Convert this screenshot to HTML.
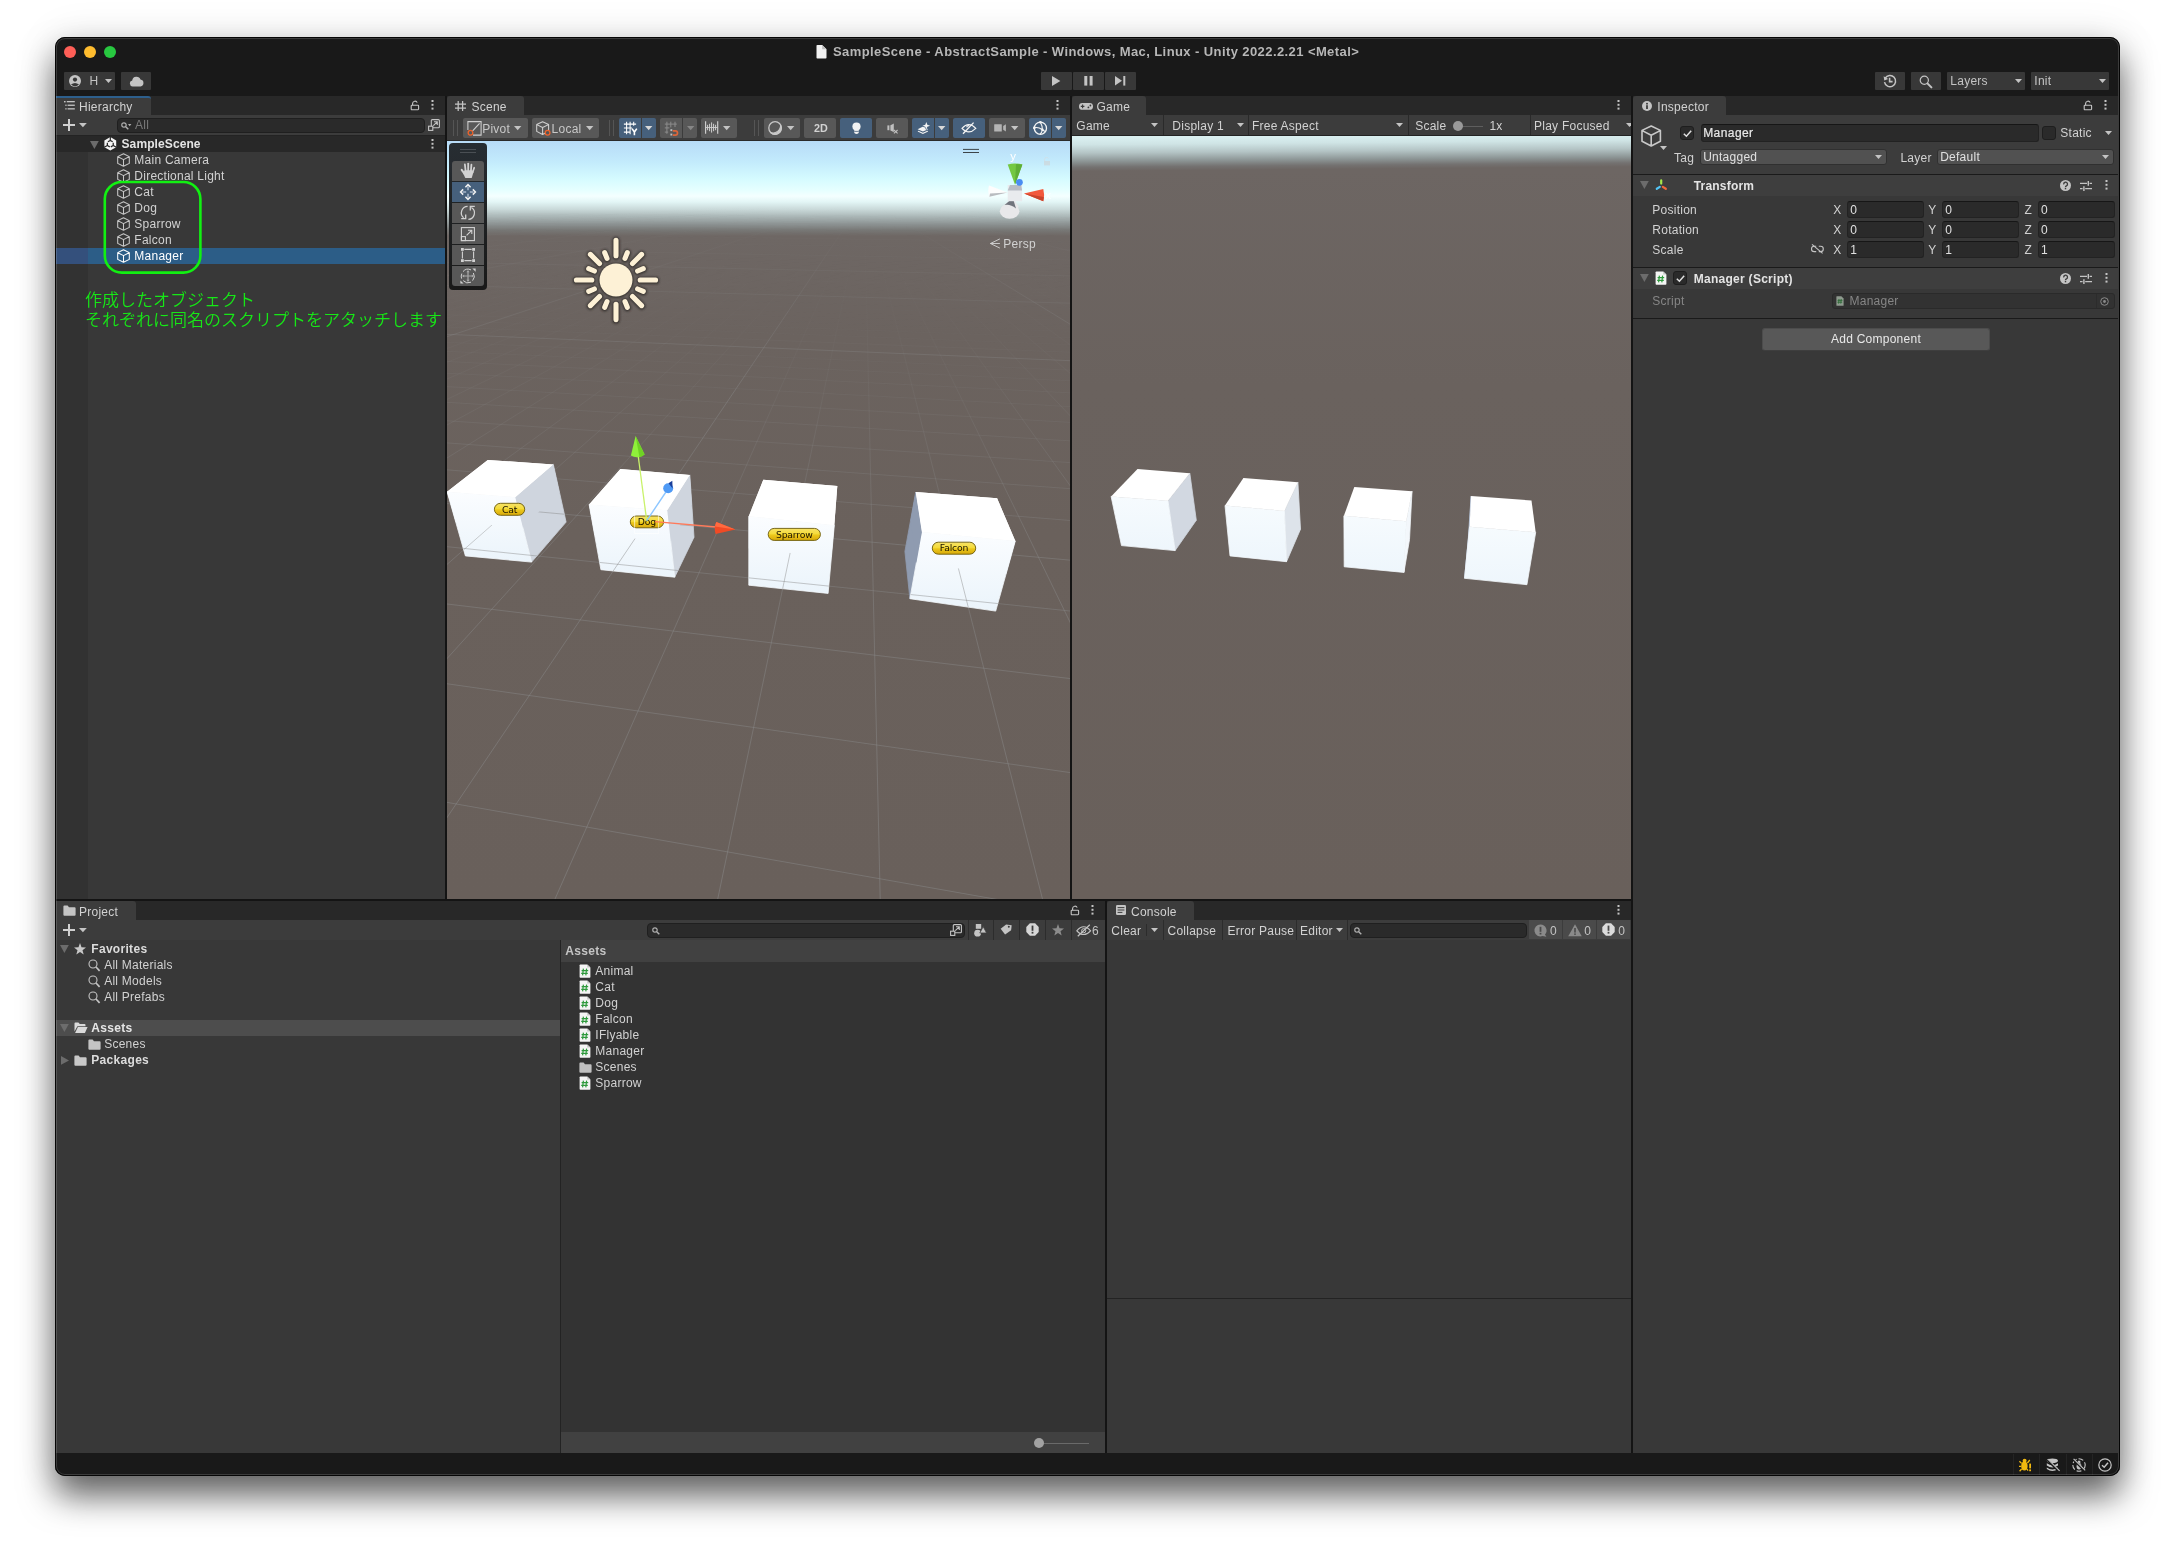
<!DOCTYPE html><html lang="ja"><head><meta charset="utf-8"><title>Unity</title><style>
html,body{margin:0;padding:0;background:#fff}
body{width:2175px;height:1549px;overflow:hidden;position:relative;font-family:"Liberation Sans","Noto Sans CJK JP",sans-serif;font-size:12px;color:#d2d2d2;letter-spacing:.25px}
#win{position:absolute;left:55px;top:37px;width:2065px;height:1439px;border-radius:10px;background:#191919;overflow:hidden;box-shadow:0 20px 34px rgba(0,0,0,.6),0 0 40px rgba(0,0,0,.1)}
#pg{position:absolute;left:-55px;top:-37px;width:2175px;height:1549px;will-change:transform}
#rim{position:absolute;left:55px;top:37px;width:2065px;height:1439px;border-radius:10px;box-shadow:inset 0 0 0 1px #060606,inset 0 0 0 2px rgba(255,255,255,.15);pointer-events:none}
.a{position:absolute}
.t{position:absolute;white-space:pre;line-height:16px;height:16px}
.b{font-weight:700}
.tabs{position:absolute;background:#282828;height:19px}
.tab{position:absolute;top:0;height:19px;background:#3c3c3c;border-radius:3px 3px 0 0}
.tb{position:absolute;background:#3c3c3c}
.pn{position:absolute;background:#383838}
.btn{position:absolute;background:#585858;border-radius:2px}
.on{background:#46607c}
.mb{position:absolute;background:#383838;height:18px;top:72px;border-radius:1px}
.fld{position:absolute;background:#2a2a2a;border:1px solid #222;border-top-color:#161616;border-radius:3px;box-sizing:border-box}
.dd{position:absolute;background:#515151;border:1px solid #303030;border-radius:3px;box-sizing:border-box}
.sep{position:absolute;background:#232323;width:1px}
svg{position:absolute;overflow:visible}
.row{position:absolute;height:16px;left:56px}
</style></head><body><div id="win"><div id="pg"><div class="a" style="left:64px;top:46px;width:12px;height:12px;border-radius:50%;background:#fe5f57"></div><div class="a" style="left:84px;top:46px;width:12px;height:12px;border-radius:50%;background:#febc2e"></div><div class="a" style="left:104px;top:46px;width:12px;height:12px;border-radius:50%;background:#28c840"></div><svg class="a" style="left:816px;top:44.5px;" width="11" height="14" viewBox="0 0 11 14"><path d="M0.5 0.8Q0.5 0 1.3 0H6.2L10.5 4.3V12.7Q10.5 13.5 9.7 13.5H1.3Q0.5 13.5 0.5 12.7Z" fill="#f2f2f2"/><path d="M6.2 0V4.3H10.5Z" fill="#bdbdbd"/></svg><div class="t b" style="left:833px;top:43.5px;font-size:13px;letter-spacing:.41px;color:#b7b7b7">SampleScene - AbstractSample - Windows, Mac, Linux - Unity 2022.2.21 &lt;Metal&gt;</div><div class="mb" style="left:64px;top:72px;width:51px;height:18px;"></div><svg class="a" style="left:69px;top:75px;" width="12" height="12" viewBox="0 0 12 12"><circle cx="6" cy="6" r="6" fill="#c4c4c4"/><circle cx="6" cy="4.6" r="2.1" fill="#383838"/><path d="M2 9.6Q6 6.2 10 9.6Q8.4 11.4 6 11.4Q3.6 11.4 2 9.6Z" fill="#383838"/></svg><div class="t " style="left:89.5px;top:73px;color:#c4c4c4">H</div><svg class="a" style="left:104.5px;top:79.3px;" width="7" height="4" viewBox="0 0 7 4"><path d="M0 0H7L3.5 4Z" fill="#c4c4c4"/></svg><div class="mb" style="left:121px;top:72px;width:30px;height:18px;"></div><svg class="a" style="left:129px;top:76px;" width="15" height="10.5" viewBox="0 0 15 10.5"><path d="M3.6 10.5A3.1 3.1 0 0 1 3.2 4.4A4.3 4.3 0 0 1 11.5 3.6A3.5 3.5 0 0 1 11.6 10.5Z" fill="#c4c4c4"/></svg><div class="mb" style="left:1041px;top:72px;width:31px;height:18px;"></div><div class="mb" style="left:1073px;top:72px;width:31px;height:18px;"></div><div class="mb" style="left:1105px;top:72px;width:30.5px;height:18px;"></div><svg class="a" style="left:1052px;top:76px;" width="9" height="10" viewBox="0 0 9 10"><path d="M0 0L8.4 5L0 10Z" fill="#c4c4c4"/></svg><svg class="a" style="left:1084px;top:76.3px;" width="10" height="9.6" viewBox="0 0 10 9.6"><rect x="0.3" y="0" width="3" height="9.6" fill="#c4c4c4"/><rect x="5.6" y="0" width="3" height="9.6" fill="#c4c4c4"/></svg><svg class="a" style="left:1115px;top:76.3px;" width="11" height="9.6" viewBox="0 0 11 9.6"><path d="M0 0L7 4.8L0 9.6Z" fill="#c4c4c4"/><rect x="8.3" y="0" width="2" height="9.6" fill="#c4c4c4"/></svg><div class="mb" style="left:1875px;top:72px;width:30px;height:18px;"></div><svg class="a" style="left:1883px;top:74px;" width="14" height="14" viewBox="0 0 14 14"><path d="M2.2 4.2A5.6 5.6 0 1 1 1.5 8.2" fill="none" stroke="#c4c4c4" stroke-width="1.5"/><path d="M0.6 2.3L1.3 6.6L5.3 5.1Z" fill="#c4c4c4"/><path d="M6.6 3.8V7.6H9.6" fill="none" stroke="#c4c4c4" stroke-width="1.6"/></svg><div class="mb" style="left:1911px;top:72px;width:30px;height:18px;"></div><svg class="a" style="left:1919px;top:74.5px;" width="14" height="14" viewBox="0 0 14 14"><circle cx="5.3" cy="5.3" r="4.1" fill="none" stroke="#c4c4c4" stroke-width="1.2"/><path d="M8.4 8.4L12.4 12.4" stroke="#c4c4c4" stroke-width="2" stroke-linecap="round"/></svg><div class="mb" style="left:1947px;top:72px;width:78px;height:18px;"></div><div class="t " style="left:1950.3px;top:73px;color:#c4c4c4">Layers</div><svg class="a" style="left:2014.5px;top:79.3px;" width="7" height="4" viewBox="0 0 7 4"><path d="M0 0H7L3.5 4Z" fill="#c4c4c4"/></svg><div class="mb" style="left:2031px;top:72px;width:78px;height:18px;"></div><div class="t " style="left:2034.3px;top:73px;color:#c4c4c4">Init</div><svg class="a" style="left:2098.5px;top:79.3px;" width="7" height="4" viewBox="0 0 7 4"><path d="M0 0H7L3.5 4Z" fill="#c4c4c4"/></svg><div class="a" style="left:56px;top:96px;width:2062px;height:1357px;background:#141414"></div><div class="tabs" style="left:56px;top:96px;width:389px;height:19px;"></div><div class="tab" style="left:56px;top:96px;width:95px;height:19px;left:56px;top:96px;border-radius:0 3px 0 0;border-top:2px solid #2d5f8c;box-sizing:border-box"></div><svg class="a" style="left:63.5px;top:101.3px;" width="11" height="9" viewBox="0 0 11 9"><rect x="0" y="0" width="1.6" height="1.4" fill="#c4c4c4"/><rect x="2.8" y="0" width="8" height="1.3" fill="#c4c4c4"/><rect x="3.6" y="3.6" width="7.2" height="1.3" fill="#c4c4c4"/><rect x="1.3" y="3.6" width="1.3" height="1.3" fill="#c4c4c4"/><rect x="3.6" y="7.2" width="7.2" height="1.3" fill="#c4c4c4"/><rect x="1.3" y="7.2" width="1.3" height="1.3" fill="#c4c4c4"/></svg><div class="t " style="left:79px;top:99px;">Hierarchy</div><svg class="a" style="left:410px;top:99.5px;" width="10" height="11" viewBox="0 0 10 11"><path d="M2.6 5.2V3.4A2.4 2.4 0 0 1 7.2 2.6" fill="none" stroke="#c4c4c4" stroke-width="1.1"/><rect x="1.2" y="5.3" width="7.4" height="4.4" rx=".6" fill="none" stroke="#c4c4c4" stroke-width="1.1"/></svg><svg class="a" style="left:430.5px;top:100px;" width="3" height="10" viewBox="0 0 3 10"><rect x=".5" y="0" width="2" height="2" fill="#c4c4c4"/><rect x=".5" y="3.8" width="2" height="2" fill="#c4c4c4"/><rect x=".5" y="7.6" width="2" height="2" fill="#c4c4c4"/></svg><div class="tb" style="left:56px;top:115px;width:389px;height:20px;"></div><div class="a" style="left:56px;top:135px;width:389px;height:1px;background:#232323"></div><svg class="a" style="left:63px;top:119px;" width="12" height="12" viewBox="0 0 12 12"><path d="M6 0V12M0 6H12" stroke="#d0d0d0" stroke-width="2"/></svg><svg class="a" style="left:79.1px;top:123.0px;" width="7.8" height="4.2" viewBox="0 0 7.8 4.2"><path d="M0 0H7.8L3.9 4.2Z" fill="#c4c4c4"/></svg><div class="fld" style="left:116.5px;top:117.5px;width:308px;height:15px;background:#2a2a2a;border-color:#1f1f1f;border-radius:4px"></div><svg class="a" style="left:121px;top:121.5px;" width="8" height="8" viewBox="0 0 8 8"><circle cx="3" cy="3" r="2.2" fill="none" stroke="#b0b0b0" stroke-width="1.2"/><path d="M4.7 4.7L7.3 7.3" stroke="#b0b0b0" stroke-width="1.4"/></svg><svg class="a" style="left:128.3px;top:124.3px;" width="3.4" height="2.2" viewBox="0 0 3.4 2.2"><path d="M0 0H3.4L1.7 2.2Z" fill="#b0b0b0"/></svg><div class="t " style="left:135px;top:117.2px;color:#7a7a7a">All</div><svg class="a" style="left:427.5px;top:118.5px;" width="12" height="12" viewBox="0 0 12 12"><rect x="3.3" y=".6" width="8.1" height="8.1" rx="1" fill="none" stroke="#c4c4c4" stroke-width="1.1"/><rect x=".6" y="7.2" width="4.2" height="4.2" fill="#3c3c3c" stroke="#c4c4c4" stroke-width="1.1"/><path d="M5.3 6.7L9.2 2.8M6 2.7H9.3V6" fill="none" stroke="#c4c4c4" stroke-width="1.1"/></svg><div class="pn" style="left:56px;top:136px;width:389px;height:763px;"></div><div class="a" style="left:56px;top:136px;width:32px;height:763px;background:#323232"></div><div class="a" style="left:56px;top:136px;width:389px;height:15.5px;background:#282828"></div><div class="a" style="left:56px;top:248px;width:389px;height:16px;background:#2c5d87"></div><div class="a" style="left:56px;top:248px;width:32px;height:16px;background:#34507c"></div><svg class="a" style="left:90.2px;top:140.8px;" width="9" height="8" viewBox="0 0 9 8"><path d="M0 0H8.8L4.4 8Z" fill="#6c6c6c"/></svg><svg class="a" style="left:103.8px;top:137.1px;" width="12.6" height="13.6" viewBox="0 0 12.6 13.6"><path d="M6.3 0L12.2 3.4V10.2L6.3 13.6L0.4 10.2V3.4Z" fill="#f6f6f6"/><g fill="none" stroke="#282828" stroke-width="1.25"><path id="uw" d="M6.3 -0.2V3.4M3.9 4.8L6.3 3.4L8.7 4.8"/><use href="#uw" transform="rotate(120 6.3 6.8)"/><use href="#uw" transform="rotate(240 6.3 6.8)"/></g></svg><div class="t b" style="left:121.5px;top:136px;color:#e4e4e4;letter-spacing:.1px">SampleScene</div><svg class="a" style="left:431.0px;top:139px;" width="3" height="10" viewBox="0 0 3 10"><rect x=".5" y="0" width="2" height="2" fill="#c4c4c4"/><rect x=".5" y="3.8" width="2" height="2" fill="#c4c4c4"/><rect x=".5" y="7.6" width="2" height="2" fill="#c4c4c4"/></svg><svg class="a" style="left:117px;top:153.2px;" width="13" height="14" viewBox="0 0 13 14"><path d="M6.5 0.7L12.3 3.6V10.4L6.5 13.3L0.7 10.4V3.6Z M0.9 3.7L6.5 6.6L12.1 3.7 M6.5 6.6V13.2" fill="none" stroke="#c8c8c8" stroke-width="1.05" stroke-linejoin="round"/></svg><div class="t " style="left:134.3px;top:152px;color:#d2d2d2">Main Camera</div><svg class="a" style="left:117px;top:169.2px;" width="13" height="14" viewBox="0 0 13 14"><path d="M6.5 0.7L12.3 3.6V10.4L6.5 13.3L0.7 10.4V3.6Z M0.9 3.7L6.5 6.6L12.1 3.7 M6.5 6.6V13.2" fill="none" stroke="#c8c8c8" stroke-width="1.05" stroke-linejoin="round"/></svg><div class="t " style="left:134.3px;top:168px;color:#d2d2d2">Directional Light</div><svg class="a" style="left:117px;top:185.2px;" width="13" height="14" viewBox="0 0 13 14"><path d="M6.5 0.7L12.3 3.6V10.4L6.5 13.3L0.7 10.4V3.6Z M0.9 3.7L6.5 6.6L12.1 3.7 M6.5 6.6V13.2" fill="none" stroke="#c8c8c8" stroke-width="1.05" stroke-linejoin="round"/></svg><div class="t " style="left:134.3px;top:184px;color:#d2d2d2">Cat</div><svg class="a" style="left:117px;top:201.2px;" width="13" height="14" viewBox="0 0 13 14"><path d="M6.5 0.7L12.3 3.6V10.4L6.5 13.3L0.7 10.4V3.6Z M0.9 3.7L6.5 6.6L12.1 3.7 M6.5 6.6V13.2" fill="none" stroke="#c8c8c8" stroke-width="1.05" stroke-linejoin="round"/></svg><div class="t " style="left:134.3px;top:200px;color:#d2d2d2">Dog</div><svg class="a" style="left:117px;top:217.2px;" width="13" height="14" viewBox="0 0 13 14"><path d="M6.5 0.7L12.3 3.6V10.4L6.5 13.3L0.7 10.4V3.6Z M0.9 3.7L6.5 6.6L12.1 3.7 M6.5 6.6V13.2" fill="none" stroke="#c8c8c8" stroke-width="1.05" stroke-linejoin="round"/></svg><div class="t " style="left:134.3px;top:216px;color:#d2d2d2">Sparrow</div><svg class="a" style="left:117px;top:233.2px;" width="13" height="14" viewBox="0 0 13 14"><path d="M6.5 0.7L12.3 3.6V10.4L6.5 13.3L0.7 10.4V3.6Z M0.9 3.7L6.5 6.6L12.1 3.7 M6.5 6.6V13.2" fill="none" stroke="#c8c8c8" stroke-width="1.05" stroke-linejoin="round"/></svg><div class="t " style="left:134.3px;top:232px;color:#d2d2d2">Falcon</div><svg class="a" style="left:117px;top:249.2px;" width="13" height="14" viewBox="0 0 13 14"><path d="M6.5 0.7L12.3 3.6V10.4L6.5 13.3L0.7 10.4V3.6Z M0.9 3.7L6.5 6.6L12.1 3.7 M6.5 6.6V13.2" fill="none" stroke="#ffffff" stroke-width="1.05" stroke-linejoin="round"/></svg><div class="t " style="left:134.3px;top:248px;color:#ffffff">Manager</div><svg class="a" style="left:0px;top:0px;pointer-events:none" width="2175" height="1549" viewBox="0 0 2175 1549"><rect x="104.8" y="182" width="95.6" height="90.6" rx="17" ry="17" fill="none" stroke="#12f012" stroke-width="2.6"/></svg><div class="a" style="left:85px;top:290.8px;font-size:17px;line-height:20.6px;color:#16e816;font-weight:350;letter-spacing:0;white-space:pre">作成したオブジェクト
それぞれに同名のスクリプトをアタッチします</div><div class="tabs" style="left:447px;top:96px;width:623px;height:19px;"></div><div class="tab" style="left:447px;top:96px;width:77px;height:19px;left:447px;top:96px"></div><svg class="a" style="left:455px;top:101px;" width="11" height="10" viewBox="0 0 11 10"><path d="M3.2 0V10M7.6 0V10M0 3H11M0 7.2H11" stroke="#c4c4c4" stroke-width="1.25" fill="none"/></svg><div class="t " style="left:471.5px;top:99px;">Scene</div><svg class="a" style="left:1055.5px;top:100px;" width="3" height="10" viewBox="0 0 3 10"><rect x=".5" y="0" width="2" height="2" fill="#c4c4c4"/><rect x=".5" y="3.8" width="2" height="2" fill="#c4c4c4"/><rect x=".5" y="7.6" width="2" height="2" fill="#c4c4c4"/></svg><div class="tb" style="left:447px;top:115px;width:623px;height:26px;"></div><div class="a" style="left:447px;top:140px;width:623px;height:1px;background:#2a2a2a"></div><div class="a" style="left:453px;top:120px;width:1px;height:16px;background:#555"></div><div class="a" style="left:456.5px;top:120px;width:1px;height:16px;background:#555"></div><div class="a" style="left:609px;top:120px;width:1px;height:16px;background:#555"></div><div class="a" style="left:612.5px;top:120px;width:1px;height:16px;background:#555"></div><div class="a" style="left:754px;top:120px;width:1px;height:16px;background:#555"></div><div class="a" style="left:757.5px;top:120px;width:1px;height:16px;background:#555"></div><div class="btn" style="left:463px;top:118px;width:65px;height:20px;border-radius:2px"></div><svg class="a" style="left:466.5px;top:120.5px;" width="15" height="15" viewBox="0 0 15 15"><path d="M0.9 9V0.6H14.1V14.1H6" fill="none" stroke="#d0d0d0" stroke-width="1.05"/><path d="M5.6 9.8L12.6 2.4" stroke="#d0d0d0" stroke-width="1.1"/><circle cx="3.5" cy="11.8" r="2.35" fill="none" stroke="#f0642c" stroke-width="1.25"/></svg><div class="t " style="left:482.2px;top:120.5px;color:#c8c8c8">Pivot</div><svg class="a" style="left:514.3px;top:126.20000000000002px;" width="7.4" height="4.2" viewBox="0 0 7.4 4.2"><path d="M0 0H7.4L3.7 4.2Z" fill="#c4c4c4"/></svg><div class="btn" style="left:532px;top:118px;width:67px;height:20px;border-radius:2px"></div><svg class="a" style="left:535.5px;top:120.6px;" width="15" height="15" viewBox="0 0 15 15"><path d="M6.6 0.7L12.6 3.5V10.4L6.6 13.5L0.7 10.4V3.5Z M0.8 3.6L6.6 6.5L12.5 3.6 M6.6 6.5V13.3" fill="none" stroke="#d0d0d0" stroke-width="1.05" stroke-linejoin="round"/><circle cx="11.6" cy="11.7" r="2.35" fill="#555" stroke="#f0642c" stroke-width="1.25"/></svg><div class="t " style="left:551.6px;top:120.5px;color:#c8c8c8">Local</div><svg class="a" style="left:585.5999999999999px;top:126.20000000000002px;" width="7.4" height="4.2" viewBox="0 0 7.4 4.2"><path d="M0 0H7.4L3.7 4.2Z" fill="#c4c4c4"/></svg><div class="btn on" style="left:619px;top:118px;width:22px;height:20px;border-radius:2px 0 0 2px"></div><div class="btn on" style="left:642px;top:118px;width:14px;height:20px;border-radius:0 2px 2px 0"></div><svg class="a" style="left:622.5px;top:120.5px;" width="17" height="15" viewBox="0 0 17 15"><path d="M3.6 0.7V13.2M7.1 0.7V13.2M10.7 0.7V4.8M0.9 3.1H13.1M0.9 6.9H9M0.9 11.1H7.6" stroke="#fff" stroke-width="1.05" fill="none"/><path d="M9 7.6L11.4 11L13.8 7.6M11.4 11V14.2" stroke="#fff" stroke-width="1.6" fill="none"/></svg><svg class="a" style="left:645.0px;top:126.20000000000002px;" width="7.4" height="4.2" viewBox="0 0 7.4 4.2"><path d="M0 0H7.4L3.7 4.2Z" fill="#d8d8d8"/></svg><div class="btn" style="left:660px;top:118px;width:22px;height:20px;border-radius:2px 0 0 2px"></div><div class="btn" style="left:683px;top:118px;width:14px;height:20px;border-radius:0 2px 2px 0"></div><svg class="a" style="left:663.5px;top:120.5px;" width="17" height="15" viewBox="0 0 17 15"><path d="M2.9 0.7V12.8M6.8 0.7V6.4M11 0.7V6M0.8 3.1H12.8M0.8 6.9H5.4M0.8 11.1H4.2" stroke="#8c8c8c" stroke-width="1" fill="none"/><rect x="6.4" y="8.2" width="1.9" height="1.9" fill="#c0c0c0"/><rect x="6.4" y="12.6" width="1.9" height="1.9" fill="#c0c0c0"/><path d="M8.8 9.8H11.3A2.2 2.2 0 0 1 11.3 14.2H8.8" fill="none" stroke="#dc663a" stroke-width="1.7"/></svg><svg class="a" style="left:686.5px;top:126.20000000000002px;" width="7.4" height="4.2" viewBox="0 0 7.4 4.2"><path d="M0 0H7.4L3.7 4.2Z" fill="#868686"/></svg><div class="btn" style="left:701px;top:118px;width:36px;height:20px;border-radius:2px"></div><svg class="a" style="left:705px;top:121px;" width="14" height="14" viewBox="0 0 14 14"><path d="M0.6 0.2V12.8M12.7 0.2V12.8" stroke="#d0d0d0" stroke-width="1.15"/><path d="M2.6 3.8V9.2M4.6 2.8V10.2M6.6 1.4V11.6M8.6 2.8V10.2M10.6 3.8V9.2" stroke="#d0d0d0" stroke-width="1"/><path d="M0.6 6.5H12.7" stroke="#d0d0d0" stroke-width=".9"/></svg><svg class="a" style="left:723.3px;top:126.20000000000002px;" width="7.4" height="4.2" viewBox="0 0 7.4 4.2"><path d="M0 0H7.4L3.7 4.2Z" fill="#c4c4c4"/></svg><div class="btn" style="left:764px;top:118px;width:36px;height:20px;border-radius:2px"></div><svg class="a" style="left:768px;top:121px;" width="14.4" height="14.4" viewBox="0 0 14.4 14.4"><circle cx="7.1" cy="7" r="6.3" fill="none" stroke="#c8c8c8" stroke-width="1.3"/><path d="M12.6 4A6.4 6.4 0 0 1 2.6 11.6A7.6 7.6 0 0 0 12.6 4Z" fill="#c8c8c8" stroke="#c8c8c8" stroke-width="1.1"/></svg><svg class="a" style="left:786.5999999999999px;top:126.30000000000001px;" width="7.4" height="4.2" viewBox="0 0 7.4 4.2"><path d="M0 0H7.4L3.7 4.2Z" fill="#c4c4c4"/></svg><div class="btn" style="left:804px;top:118px;width:32px;height:20px;border-radius:2px"></div><div class="t b" style="left:813.9px;top:120.2px;font-size:10.8px;color:#d2d2d2;letter-spacing:0">2D</div><div class="btn on" style="left:840px;top:118px;width:32px;height:20px;border-radius:2px"></div><svg class="a" style="left:851.5px;top:121.6px;" width="9" height="13" viewBox="0 0 9 13"><circle cx="4.5" cy="4.5" r="4.1" fill="#f2f2f2"/><path d="M2.3 7.4H6.7V10.2Q6.7 12 4.5 12Q2.3 12 2.3 10.2Z" fill="#f2f2f2"/><rect x="2.3" y="8.9" width="4.4" height=".8" fill="#46607c"/></svg><div class="btn" style="left:876px;top:118px;width:32px;height:20px;border-radius:2px"></div><svg class="a" style="left:886.5px;top:122.6px;" width="12" height="11" viewBox="0 0 12 11"><rect x="0.4" y="2.4" width="2" height="4.8" fill="#c0c0c0"/><path d="M3.4 2.2Q5 1.6 6.8 0.4V9.2Q5 8 3.4 7.4Z" fill="#c0c0c0"/><path d="M6.9 7L10.6 10.4M10.6 7L6.9 10.4" stroke="#c0c0c0" stroke-width="1.1"/></svg><div class="btn on" style="left:912px;top:118px;width:22px;height:20px;border-radius:2px 0 0 2px"></div><div class="btn on" style="left:935px;top:118px;width:14px;height:20px;border-radius:0 2px 2px 0"></div><svg class="a" style="left:916.6px;top:121.6px;" width="14" height="12.4" viewBox="0 0 14 12.4"><path d="M9.3 0L10.3 2.8L13.1 3.8L10.3 4.8L9.3 7.6L8.3 4.8L5.5 3.8L8.3 2.8Z" fill="#f4f4f4"/><path d="M5.6 4.8L0.6 7.2L5.9 9.6L11.2 7.2L10 6.6L9.3 8.4L8 5.6Z" fill="#f4f4f4"/><path d="M1.4 8.8L0.6 9.4L5.9 11.9L11.2 9.4L10.4 8.8L5.9 10.8Z" fill="#f4f4f4"/></svg><svg class="a" style="left:938.3px;top:126.20000000000002px;" width="7.4" height="4.2" viewBox="0 0 7.4 4.2"><path d="M0 0H7.4L3.7 4.2Z" fill="#d8d8d8"/></svg><div class="btn on" style="left:953px;top:118px;width:32px;height:20px;border-radius:2px"></div><svg class="a" style="left:961.4px;top:121.6px;" width="16" height="12.6" viewBox="0 0 16 12.6"><path d="M1 6.3Q7.7 -1 14.8 6.3Q7.7 13.4 1 6.3Z" fill="none" stroke="#f4f4f4" stroke-width="1.15"/><path d="M5.6 5.2A2.4 2.4 0 0 1 8 3.6" fill="none" stroke="#f4f4f4" stroke-width="1.1"/><path d="M2 11.8L12.6 0.6" stroke="#f4f4f4" stroke-width="1.35"/></svg><div class="btn" style="left:989px;top:118px;width:36px;height:20px;border-radius:2px"></div><svg class="a" style="left:994px;top:124.4px;" width="12.4" height="8" viewBox="0 0 12.4 8"><rect x="0.2" y="0.2" width="7.6" height="7.3" rx="0.5" fill="#b4b4b4"/><path d="M9.2 2L11.9 0.2V7.5L9.2 5.7Z" fill="#b4b4b4"/></svg><svg class="a" style="left:1011.3px;top:126.20000000000002px;" width="7.4" height="4.2" viewBox="0 0 7.4 4.2"><path d="M0 0H7.4L3.7 4.2Z" fill="#c4c4c4"/></svg><div class="btn on" style="left:1029px;top:118px;width:22px;height:20px;border-radius:2px 0 0 2px"></div><div class="btn on" style="left:1052px;top:118px;width:14px;height:20px;border-radius:0 2px 2px 0"></div><svg class="a" style="left:1033px;top:121px;" width="15" height="15" viewBox="0 0 15 15"><circle cx="7.4" cy="7.2" r="6.1" fill="none" stroke="#f4f4f4" stroke-width="1.3"/><path d="M7.4 1.2Q9.6 5 9.4 8.8M1.4 6.8Q5 5.6 9.4 8.8Q11.6 10.2 12.4 10.6M9.4 8.8Q8.8 11.6 7 13.2" fill="none" stroke="#f4f4f4" stroke-width="1.1"/><circle cx="7.4" cy="1.3" r="1.3" fill="#f4f4f4"/><circle cx="1.3" cy="6.9" r="1.3" fill="#f4f4f4"/><circle cx="9.4" cy="8.8" r="1.3" fill="#f4f4f4"/></svg><svg class="a" style="left:1055.3px;top:126.20000000000002px;" width="7.4" height="4.2" viewBox="0 0 7.4 4.2"><path d="M0 0H7.4L3.7 4.2Z" fill="#d8d8d8"/></svg><svg class="a" style="left:447px;top:141px;overflow:hidden" width="623" height="758" viewBox="447 141 623 758"><defs>
<linearGradient id="sky" x1="0" y1="141" x2="0" y2="236" gradientUnits="userSpaceOnUse">
<stop offset="0" stop-color="#b7dbf7"/><stop offset=".22" stop-color="#c3ebfc"/><stop offset=".40" stop-color="#d5fbff"/><stop offset=".52" stop-color="#e6ffff"/><stop offset=".58" stop-color="#f4ffff"/><stop offset=".64" stop-color="#e3f6f6"/><stop offset=".72" stop-color="#c9d9d9"/><stop offset=".80" stop-color="#a9b5b5"/><stop offset=".88" stop-color="#8b9191"/><stop offset=".94" stop-color="#777775"/><stop offset="1" stop-color="#6e6764"/></linearGradient>
<linearGradient id="gmin" x1="0" y1="236" x2="0" y2="898" gradientUnits="userSpaceOnUse"><stop offset="0.000" stop-color="#888888" stop-opacity="0"/><stop offset="0.127" stop-color="#888888" stop-opacity="0.04"/><stop offset="0.248" stop-color="#888888" stop-opacity="0.15"/><stop offset="0.369" stop-color="#888888" stop-opacity="0.3"/><stop offset="0.489" stop-color="#888888" stop-opacity="0.45"/><stop offset="1.000" stop-color="#888888" stop-opacity="0.52"/></linearGradient>
<linearGradient id="gmaj" x1="0" y1="204" x2="0" y2="898" gradientUnits="userSpaceOnUse"><stop offset="0.000" stop-color="#888888" stop-opacity="0"/><stop offset="0.052" stop-color="#888888" stop-opacity="0.05"/><stop offset="0.138" stop-color="#888888" stop-opacity="0.22"/><stop offset="0.282" stop-color="#888888" stop-opacity="0.45"/><stop offset="1.000" stop-color="#888888" stop-opacity="0.52"/></linearGradient>
<linearGradient id="sgr" x1="0" y1="236" x2="0" y2="898" gradientUnits="userSpaceOnUse"><stop offset="0" stop-color="#6e6764"/><stop offset=".15" stop-color="#6b635f"/><stop offset=".45" stop-color="#6a615c"/><stop offset="1" stop-color="#69605b"/></linearGradient><linearGradient id="fr" x1="0" y1="0" x2="0" y2="1"><stop offset="0" stop-color="#fbfdff"/><stop offset="1" stop-color="#ecf5fb"/></linearGradient>
<linearGradient id="pill" x1="0" y1="0" x2="0" y2="1"><stop offset="0" stop-color="#f6e268"/><stop offset=".45" stop-color="#f5dc3a"/><stop offset=".55" stop-color="#ecc81c"/><stop offset="1" stop-color="#d8a90a"/></linearGradient>
<filter id="sh" x="-20%" y="-20%" width="140%" height="140%"><feGaussianBlur stdDeviation="0.9"/></filter>
</defs><rect x="447" y="141" width="623" height="96" fill="url(#sky)"/><rect x="447" y="236" width="623" height="663" fill="url(#sgr)"/><g fill="none" stroke="#888888" stroke-width="1"><path d="M300.0 211.8L1250.0 219.0" stroke-opacity="0.02"/><path d="M300.0 212.8L1250.0 220.3" stroke-opacity="0.02"/><path d="M300.0 213.9L1250.0 221.8" stroke-opacity="0.02"/><path d="M300.0 215.3L1250.0 223.5" stroke-opacity="0.02"/><path d="M300.0 216.9L1250.0 225.6" stroke-opacity="0.02"/><path d="M300.0 218.7L1250.0 227.9" stroke-opacity="0.03"/><path d="M300.0 221.0L1250.0 230.8" stroke-opacity="0.03"/><path d="M300.0 223.7L1250.0 234.4" stroke-opacity="0.03"/><path d="M300.0 227.2L1250.0 238.8" stroke-opacity="0.04"/><path d="M300.0 231.6L1250.0 244.5" stroke-opacity="0.05"/><path d="M300.0 237.6L1250.0 252.2" stroke-opacity="0.06"/><path d="M300.0 246.1L1250.0 263.2" stroke-opacity="0.09"/><path d="M300.0 249.4L1250.0 267.4" stroke-opacity="0.01"/><path d="M300.0 250.6L1250.0 268.9" stroke-opacity="0.01"/><path d="M300.0 251.9L1250.0 270.5" stroke-opacity="0.01"/><path d="M300.0 253.2L1250.0 272.2" stroke-opacity="0.01"/><path d="M300.0 254.6L1250.0 274.0" stroke-opacity="0.01"/><path d="M300.0 256.0L1250.0 275.8" stroke-opacity="0.01"/><path d="M300.0 257.5L1250.0 277.8" stroke-opacity="0.01"/><path d="M300.0 259.1L1250.0 279.8" stroke-opacity="0.13"/><path d="M300.0 260.8L1250.0 282.0" stroke-opacity="0.02"/><path d="M300.0 262.6L1250.0 284.3" stroke-opacity="0.02"/><path d="M300.0 264.4L1250.0 286.7" stroke-opacity="0.02"/><path d="M300.0 266.4L1250.0 289.2" stroke-opacity="0.02"/><path d="M300.0 268.5L1250.0 291.9" stroke-opacity="0.02"/><path d="M300.0 270.8L1250.0 294.8" stroke-opacity="0.02"/><path d="M300.0 273.2L1250.0 297.9" stroke-opacity="0.02"/><path d="M300.0 275.7L1250.0 301.1" stroke-opacity="0.02"/><path d="M300.0 278.4L1250.0 304.6" stroke-opacity="0.03"/><path d="M300.0 281.3L1250.0 308.3" stroke-opacity="0.20"/><path d="M300.0 284.4L1250.0 312.3" stroke-opacity="0.03"/><path d="M300.0 287.8L1250.0 316.7" stroke-opacity="0.03"/><path d="M300.0 291.4L1250.0 321.3" stroke-opacity="0.03"/><path d="M300.0 295.4L1250.0 326.4" stroke-opacity="0.04"/><path d="M300.0 299.6L1250.0 331.8" stroke-opacity="0.04"/><path d="M300.0 304.3L1250.0 337.8" stroke-opacity="0.04"/><path d="M300.0 309.4L1250.0 344.4" stroke-opacity="0.05"/><path d="M300.0 315.0L1250.0 351.6" stroke-opacity="0.06"/><path d="M300.0 321.2L1250.0 359.5" stroke-opacity="0.07"/><path d="M300.0 328.1L1250.0 368.3" stroke-opacity="0.33"/><path d="M300.0 335.7L1250.0 378.2" stroke-opacity="0.09"/><path d="M300.0 344.4L1250.0 389.3" stroke-opacity="0.10"/><path d="M300.0 354.1L1250.0 401.9" stroke-opacity="0.12"/><path d="M300.0 365.3L1250.0 416.2" stroke-opacity="0.14"/><path d="M300.0 378.2L1250.0 432.7" stroke-opacity="0.16"/><path d="M300.0 393.2L1250.0 452.0" stroke-opacity="0.19"/><path d="M300.0 410.9L1250.0 474.7" stroke-opacity="0.23"/><path d="M300.0 432.1L1250.0 501.9" stroke-opacity="0.27"/><path d="M300.0 457.9L1250.0 535.1" stroke-opacity="0.33"/><path d="M300.0 490.2L1250.0 576.5" stroke-opacity="0.47"/><path d="M300.0 531.5L1250.0 629.6" stroke-opacity="0.45"/><path d="M300.0 586.4L1250.0 700.1" stroke-opacity="0.47"/><path d="M300.0 662.8L1250.0 798.2" stroke-opacity="0.48"/><path d="M300.0 776.4L1250.0 944.1" stroke-opacity="0.51"/><path d="M300.0 963.4L1250.0 1184.2" stroke-opacity="0.52"/></g><path d="M864.3 198.5L-11791.6 1000M864.3 198.5L-11587.1 1000M864.3 198.5L-11179.1 1000M864.3 198.5L-10975.5 1000M864.3 198.5L-10772.3 1000M864.3 198.5L-10569.3 1000M864.3 198.5L-10366.7 1000M864.3 198.5L-10164.3 1000M864.3 198.5L-9962.3 1000M864.3 198.5L-9760.6 1000M864.3 198.5L-9559.2 1000M864.3 198.5L-9157.3 1000M864.3 198.5L-8956.8 1000M864.3 198.5L-8756.6 1000M864.3 198.5L-8556.7 1000M864.3 198.5L-8357.1 1000M864.3 198.5L-8157.8 1000M864.3 198.5L-7958.8 1000M864.3 198.5L-7760.1 1000M864.3 198.5L-7561.7 1000M864.3 198.5L-7165.8 1000M864.3 198.5L-6968.2 1000M864.3 198.5L-6771.0 1000M864.3 198.5L-6574.1 1000M864.3 198.5L-6377.5 1000M864.3 198.5L-6181.1 1000M864.3 198.5L-5985.1 1000M864.3 198.5L-5789.4 1000M864.3 198.5L-5593.9 1000M864.3 198.5L-5203.9 1000M864.3 198.5L-5009.3 1000M864.3 198.5L-4815.0 1000M864.3 198.5L-4621.0 1000M864.3 198.5L-4427.3 1000M864.3 198.5L-4233.8 1000M864.3 198.5L-4040.7 1000M864.3 198.5L-3847.8 1000M864.3 198.5L-3655.3 1000M864.3 198.5L-3271.0 1000M864.3 198.5L-3079.2 1000M864.3 198.5L-2887.8 1000M864.3 198.5L-2696.7 1000M864.3 198.5L-2505.8 1000M864.3 198.5L-2315.2 1000M864.3 198.5L-2124.9 1000M864.3 198.5L-1934.8 1000M864.3 198.5L-1745.1 1000M864.3 198.5L-1366.4 1000M864.3 198.5L-1177.5 1000M864.3 198.5L-988.8 1000M864.3 198.5L-800.5 1000M864.3 198.5L-612.4 1000M864.3 198.5L-424.6 1000M864.3 198.5L-237.0 1000M864.3 198.5L-49.7 1000M864.3 198.5L137.3 1000M864.3 198.5L510.4 1000M864.3 198.5L696.6 1000M864.3 198.5L882.5 1000M864.3 198.5L1068.2 1000M864.3 198.5L1253.5 1000M864.3 198.5L1438.7 1000M864.3 198.5L1623.5 1000M864.3 198.5L1808.1 1000M864.3 198.5L1992.4 1000M864.3 198.5L2360.2 1000M864.3 198.5L2543.7 1000M864.3 198.5L2726.9 1000M864.3 198.5L2909.9 1000M864.3 198.5L3092.6 1000M864.3 198.5L3275.0 1000M864.3 198.5L3457.2 1000M864.3 198.5L3639.1 1000M864.3 198.5L3820.8 1000M864.3 198.5L4183.4 1000M864.3 198.5L4364.2 1000M864.3 198.5L4544.9 1000M864.3 198.5L4725.2 1000M864.3 198.5L4905.3 1000M864.3 198.5L5085.2 1000M864.3 198.5L5264.8 1000M864.3 198.5L5444.1 1000M864.3 198.5L5623.2 1000M864.3 198.5L5980.6 1000M864.3 198.5L6158.9 1000M864.3 198.5L6337.0 1000M864.3 198.5L6514.8 1000M864.3 198.5L6692.3 1000M864.3 198.5L6869.6 1000M864.3 198.5L7046.7 1000M864.3 198.5L7223.5 1000M864.3 198.5L7400.0 1000M864.3 198.5L7752.4 1000M864.3 198.5L7928.2 1000M864.3 198.5L8103.7 1000M864.3 198.5L8279.0 1000M864.3 198.5L8454.1 1000M864.3 198.5L8628.9 1000M864.3 198.5L8803.5 1000M864.3 198.5L8977.8 1000M864.3 198.5L9151.9 1000M864.3 198.5L9499.3 1000M864.3 198.5L9672.6 1000M864.3 198.5L9845.7 1000M864.3 198.5L10018.6 1000M864.3 198.5L10191.2 1000M864.3 198.5L10363.6 1000M864.3 198.5L10535.7 1000M864.3 198.5L10707.6 1000M864.3 198.5L10879.3 1000M864.3 198.5L11221.9 1000M864.3 198.5L11392.8 1000M864.3 198.5L11563.5 1000M864.3 198.5L11734.0 1000M864.3 198.5L11904.2 1000M864.3 198.5L12074.2 1000M864.3 198.5L12243.9 1000" fill="none" stroke="url(#gmin)" stroke-width="1"/><path d="M864.3 198.5L-11383.0 1000M864.3 198.5L-9358.1 1000M864.3 198.5L-7363.6 1000M864.3 198.5L-5398.7 1000M864.3 198.5L-3463.0 1000M864.3 198.5L-1555.6 1000M864.3 198.5L324.0 1000M864.3 198.5L2176.4 1000M864.3 198.5L4002.2 1000M864.3 198.5L5802.0 1000M864.3 198.5L7576.3 1000M864.3 198.5L9325.7 1000M864.3 198.5L11050.7 1000" fill="none" stroke="url(#gmaj)" stroke-width="1"/><linearGradient id="fr_cat" x1="0" y1="491.7" x2="0" y2="562.1" gradientUnits="userSpaceOnUse"><stop offset="0" stop-color="#fbfdff"/><stop offset="1" stop-color="#ebf4fb"/></linearGradient><polygon points="515.3,497.2 553.3,464.4 566.1,522.1 531.6,562.1" fill="#cfd5de" stroke="#cfd5de" stroke-width=".8" stroke-linejoin="round"/><polygon points="447.1,491.7 515.3,497.2 531.6,562.1 465.4,555.9" fill="url(#fr_cat)" stroke="#f4f9fd" stroke-width=".8" stroke-linejoin="round"/><polygon points="487.8,460.0 553.3,464.4 515.3,497.2 447.1,491.7" fill="#ffffff" /><linearGradient id="fr_dog" x1="0" y1="504.4" x2="0" y2="577.2" gradientUnits="userSpaceOnUse"><stop offset="0" stop-color="#fbfdff"/><stop offset="1" stop-color="#ebf4fb"/></linearGradient><polygon points="667.3,510.3 689.8,474.9 694.0,537.2 674.7,577.2" fill="#cfd5de" stroke="#cfd5de" stroke-width=".8" stroke-linejoin="round"/><polygon points="589.1,504.4 667.3,510.3 674.7,577.2 600.9,569.7" fill="url(#fr_dog)" stroke="#f4f9fd" stroke-width=".8" stroke-linejoin="round"/><polygon points="620.4,469.0 689.8,474.9 667.3,510.3 589.1,504.4" fill="#ffffff" /><linearGradient id="fr_spa" x1="0" y1="516.2" x2="0" y2="593.4" gradientUnits="userSpaceOnUse"><stop offset="0" stop-color="#fbfdff"/><stop offset="1" stop-color="#ebf4fb"/></linearGradient><polygon points="748.8,516.2 834.3,525.2 828.1,593.4 748.8,585.2" fill="url(#fr_spa)" stroke="#f4f9fd" stroke-width=".8" stroke-linejoin="round"/><polygon points="763.3,479.7 837.3,486.1 834.3,525.2 748.8,516.2" fill="#ffffff" /><linearGradient id="fr_fal" x1="0" y1="532.1" x2="0" y2="611.1" gradientUnits="userSpaceOnUse"><stop offset="0" stop-color="#fbfdff"/><stop offset="1" stop-color="#ebf4fb"/></linearGradient><polygon points="915.7,492.1 921.9,532.1 909.9,598.7 904.9,551.4" fill="#8f9bb0" stroke="#8f9bb0" stroke-width=".8" stroke-linejoin="round"/><polygon points="921.9,532.1 1015.3,541.0 995.7,611.1 909.9,598.7" fill="url(#fr_fal)" stroke="#f4f9fd" stroke-width=".8" stroke-linejoin="round"/><polygon points="915.7,492.1 997.1,498.3 1015.3,541.0 921.9,532.1" fill="#ffffff" /><g clip-path="url(#cubeclip)"><g fill="none" stroke="#888888" stroke-width="1"><path d="M300.0 211.8L1250.0 219.0" stroke-opacity="0.02"/><path d="M300.0 212.8L1250.0 220.3" stroke-opacity="0.02"/><path d="M300.0 213.9L1250.0 221.8" stroke-opacity="0.02"/><path d="M300.0 215.3L1250.0 223.5" stroke-opacity="0.02"/><path d="M300.0 216.9L1250.0 225.6" stroke-opacity="0.02"/><path d="M300.0 218.7L1250.0 227.9" stroke-opacity="0.03"/><path d="M300.0 221.0L1250.0 230.8" stroke-opacity="0.03"/><path d="M300.0 223.7L1250.0 234.4" stroke-opacity="0.03"/><path d="M300.0 227.2L1250.0 238.8" stroke-opacity="0.04"/><path d="M300.0 231.6L1250.0 244.5" stroke-opacity="0.05"/><path d="M300.0 237.6L1250.0 252.2" stroke-opacity="0.06"/><path d="M300.0 246.1L1250.0 263.2" stroke-opacity="0.09"/><path d="M300.0 249.4L1250.0 267.4" stroke-opacity="0.01"/><path d="M300.0 250.6L1250.0 268.9" stroke-opacity="0.01"/><path d="M300.0 251.9L1250.0 270.5" stroke-opacity="0.01"/><path d="M300.0 253.2L1250.0 272.2" stroke-opacity="0.01"/><path d="M300.0 254.6L1250.0 274.0" stroke-opacity="0.01"/><path d="M300.0 256.0L1250.0 275.8" stroke-opacity="0.01"/><path d="M300.0 257.5L1250.0 277.8" stroke-opacity="0.01"/><path d="M300.0 259.1L1250.0 279.8" stroke-opacity="0.13"/><path d="M300.0 260.8L1250.0 282.0" stroke-opacity="0.02"/><path d="M300.0 262.6L1250.0 284.3" stroke-opacity="0.02"/><path d="M300.0 264.4L1250.0 286.7" stroke-opacity="0.02"/><path d="M300.0 266.4L1250.0 289.2" stroke-opacity="0.02"/><path d="M300.0 268.5L1250.0 291.9" stroke-opacity="0.02"/><path d="M300.0 270.8L1250.0 294.8" stroke-opacity="0.02"/><path d="M300.0 273.2L1250.0 297.9" stroke-opacity="0.02"/><path d="M300.0 275.7L1250.0 301.1" stroke-opacity="0.02"/><path d="M300.0 278.4L1250.0 304.6" stroke-opacity="0.03"/><path d="M300.0 281.3L1250.0 308.3" stroke-opacity="0.20"/><path d="M300.0 284.4L1250.0 312.3" stroke-opacity="0.03"/><path d="M300.0 287.8L1250.0 316.7" stroke-opacity="0.03"/><path d="M300.0 291.4L1250.0 321.3" stroke-opacity="0.03"/><path d="M300.0 295.4L1250.0 326.4" stroke-opacity="0.04"/><path d="M300.0 299.6L1250.0 331.8" stroke-opacity="0.04"/><path d="M300.0 304.3L1250.0 337.8" stroke-opacity="0.04"/><path d="M300.0 309.4L1250.0 344.4" stroke-opacity="0.05"/><path d="M300.0 315.0L1250.0 351.6" stroke-opacity="0.06"/><path d="M300.0 321.2L1250.0 359.5" stroke-opacity="0.07"/><path d="M300.0 328.1L1250.0 368.3" stroke-opacity="0.33"/><path d="M300.0 335.7L1250.0 378.2" stroke-opacity="0.09"/><path d="M300.0 344.4L1250.0 389.3" stroke-opacity="0.10"/><path d="M300.0 354.1L1250.0 401.9" stroke-opacity="0.12"/><path d="M300.0 365.3L1250.0 416.2" stroke-opacity="0.14"/><path d="M300.0 378.2L1250.0 432.7" stroke-opacity="0.16"/><path d="M300.0 393.2L1250.0 452.0" stroke-opacity="0.19"/><path d="M300.0 410.9L1250.0 474.7" stroke-opacity="0.23"/><path d="M300.0 432.1L1250.0 501.9" stroke-opacity="0.27"/><path d="M300.0 457.9L1250.0 535.1" stroke-opacity="0.33"/><path d="M300.0 490.2L1250.0 576.5" stroke-opacity="0.47"/><path d="M300.0 531.5L1250.0 629.6" stroke-opacity="0.45"/><path d="M300.0 586.4L1250.0 700.1" stroke-opacity="0.47"/><path d="M300.0 662.8L1250.0 798.2" stroke-opacity="0.48"/><path d="M300.0 776.4L1250.0 944.1" stroke-opacity="0.51"/><path d="M300.0 963.4L1250.0 1184.2" stroke-opacity="0.52"/></g><path d="M864.3 198.5L-11791.6 1000M864.3 198.5L-11587.1 1000M864.3 198.5L-11179.1 1000M864.3 198.5L-10975.5 1000M864.3 198.5L-10772.3 1000M864.3 198.5L-10569.3 1000M864.3 198.5L-10366.7 1000M864.3 198.5L-10164.3 1000M864.3 198.5L-9962.3 1000M864.3 198.5L-9760.6 1000M864.3 198.5L-9559.2 1000M864.3 198.5L-9157.3 1000M864.3 198.5L-8956.8 1000M864.3 198.5L-8756.6 1000M864.3 198.5L-8556.7 1000M864.3 198.5L-8357.1 1000M864.3 198.5L-8157.8 1000M864.3 198.5L-7958.8 1000M864.3 198.5L-7760.1 1000M864.3 198.5L-7561.7 1000M864.3 198.5L-7165.8 1000M864.3 198.5L-6968.2 1000M864.3 198.5L-6771.0 1000M864.3 198.5L-6574.1 1000M864.3 198.5L-6377.5 1000M864.3 198.5L-6181.1 1000M864.3 198.5L-5985.1 1000M864.3 198.5L-5789.4 1000M864.3 198.5L-5593.9 1000M864.3 198.5L-5203.9 1000M864.3 198.5L-5009.3 1000M864.3 198.5L-4815.0 1000M864.3 198.5L-4621.0 1000M864.3 198.5L-4427.3 1000M864.3 198.5L-4233.8 1000M864.3 198.5L-4040.7 1000M864.3 198.5L-3847.8 1000M864.3 198.5L-3655.3 1000M864.3 198.5L-3271.0 1000M864.3 198.5L-3079.2 1000M864.3 198.5L-2887.8 1000M864.3 198.5L-2696.7 1000M864.3 198.5L-2505.8 1000M864.3 198.5L-2315.2 1000M864.3 198.5L-2124.9 1000M864.3 198.5L-1934.8 1000M864.3 198.5L-1745.1 1000M864.3 198.5L-1366.4 1000M864.3 198.5L-1177.5 1000M864.3 198.5L-988.8 1000M864.3 198.5L-800.5 1000M864.3 198.5L-612.4 1000M864.3 198.5L-424.6 1000M864.3 198.5L-237.0 1000M864.3 198.5L-49.7 1000M864.3 198.5L137.3 1000M864.3 198.5L510.4 1000M864.3 198.5L696.6 1000M864.3 198.5L882.5 1000M864.3 198.5L1068.2 1000M864.3 198.5L1253.5 1000M864.3 198.5L1438.7 1000M864.3 198.5L1623.5 1000M864.3 198.5L1808.1 1000M864.3 198.5L1992.4 1000M864.3 198.5L2360.2 1000M864.3 198.5L2543.7 1000M864.3 198.5L2726.9 1000M864.3 198.5L2909.9 1000M864.3 198.5L3092.6 1000M864.3 198.5L3275.0 1000M864.3 198.5L3457.2 1000M864.3 198.5L3639.1 1000M864.3 198.5L3820.8 1000M864.3 198.5L4183.4 1000M864.3 198.5L4364.2 1000M864.3 198.5L4544.9 1000M864.3 198.5L4725.2 1000M864.3 198.5L4905.3 1000M864.3 198.5L5085.2 1000M864.3 198.5L5264.8 1000M864.3 198.5L5444.1 1000M864.3 198.5L5623.2 1000M864.3 198.5L5980.6 1000M864.3 198.5L6158.9 1000M864.3 198.5L6337.0 1000M864.3 198.5L6514.8 1000M864.3 198.5L6692.3 1000M864.3 198.5L6869.6 1000M864.3 198.5L7046.7 1000M864.3 198.5L7223.5 1000M864.3 198.5L7400.0 1000M864.3 198.5L7752.4 1000M864.3 198.5L7928.2 1000M864.3 198.5L8103.7 1000M864.3 198.5L8279.0 1000M864.3 198.5L8454.1 1000M864.3 198.5L8628.9 1000M864.3 198.5L8803.5 1000M864.3 198.5L8977.8 1000M864.3 198.5L9151.9 1000M864.3 198.5L9499.3 1000M864.3 198.5L9672.6 1000M864.3 198.5L9845.7 1000M864.3 198.5L10018.6 1000M864.3 198.5L10191.2 1000M864.3 198.5L10363.6 1000M864.3 198.5L10535.7 1000M864.3 198.5L10707.6 1000M864.3 198.5L10879.3 1000M864.3 198.5L11221.9 1000M864.3 198.5L11392.8 1000M864.3 198.5L11563.5 1000M864.3 198.5L11734.0 1000M864.3 198.5L11904.2 1000M864.3 198.5L12074.2 1000M864.3 198.5L12243.9 1000" fill="none" stroke="url(#gmin)" stroke-width="1"/><path d="M864.3 198.5L-11383.0 1000M864.3 198.5L-9358.1 1000M864.3 198.5L-7363.6 1000M864.3 198.5L-5398.7 1000M864.3 198.5L-3463.0 1000M864.3 198.5L-1555.6 1000M864.3 198.5L324.0 1000M864.3 198.5L2176.4 1000M864.3 198.5L4002.2 1000M864.3 198.5L5802.0 1000M864.3 198.5L7576.3 1000M864.3 198.5L9325.7 1000M864.3 198.5L11050.7 1000" fill="none" stroke="url(#gmaj)" stroke-width="1"/></g><clipPath id="cubeclip"><polygon points="447.1,491.7 515.3,497.2 531.6,562.1 465.4,555.9" fill="#000" /><polygon points="515.3,497.2 553.3,464.4 566.1,522.1 531.6,562.1" fill="#000" /><polygon points="589.1,504.4 667.3,510.3 674.7,577.2 600.9,569.7" fill="#000" /><polygon points="667.3,510.3 689.8,474.9 694.0,537.2 674.7,577.2" fill="#000" /><polygon points="748.8,516.2 834.3,525.2 828.1,593.4 748.8,585.2" fill="#000" /><polygon points="921.9,532.1 1015.3,541.0 995.7,611.1 909.9,598.7" fill="#000" /></clipPath><polygon points="447.1,491.7 515.3,497.2 523.0,527.7 455.7,521.9" fill="url(#fr_cat)" /><polygon points="515.3,497.2 553.3,464.4 559.3,491.5 523.0,527.7" fill="#cfd5de" /><polygon points="487.8,460.0 553.3,464.4 515.3,497.2 447.1,491.7" fill="#ffffff" /><polygon points="589.1,504.4 667.3,510.3 670.8,541.7 594.6,535.1" fill="url(#fr_dog)" /><polygon points="667.3,510.3 689.8,474.9 691.8,504.2 670.8,541.7" fill="#cfd5de" /><polygon points="620.4,469.0 689.8,474.9 667.3,510.3 589.1,504.4" fill="#ffffff" /><polygon points="748.8,516.2 834.3,525.2 831.4,557.3 748.8,548.6" fill="url(#fr_spa)" /><polygon points="763.3,479.7 837.3,486.1 834.3,525.2 748.8,516.2" fill="#ffffff" /><polygon points="921.9,532.1 1015.3,541.0 1006.1,573.9 916.3,563.4" fill="url(#fr_fal)" /><polygon points="915.7,492.1 921.9,532.1 916.3,563.4 910.6,520.0" fill="#8f9bb0" /><polygon points="915.7,492.1 997.1,498.3 1015.3,541.0 921.9,532.1" fill="#ffffff" /><rect x="494.4" y="503.3" width="30.3" height="12" rx="6.0" fill="url(#pill)" stroke="#6b5a08" stroke-width=".9"/><text x="509.54999999999995" y="512.5" text-anchor="middle" font-family="DejaVu Sans,Liberation Sans,sans-serif" font-size="9.3" fill="#1a1400" letter-spacing="-.2">Cat</text><rect x="768.2" y="528.4" width="52.2" height="12" rx="6.0" fill="url(#pill)" stroke="#6b5a08" stroke-width=".9"/><text x="794.3000000000001" y="537.6" text-anchor="middle" font-family="DejaVu Sans,Liberation Sans,sans-serif" font-size="9.3" fill="#1a1400" letter-spacing="-.2">Sparrow</text><rect x="932.3" y="542.2" width="43.4" height="12" rx="6.0" fill="url(#pill)" stroke="#6b5a08" stroke-width=".9"/><text x="954.0" y="551.4000000000001" text-anchor="middle" font-family="DejaVu Sans,Liberation Sans,sans-serif" font-size="9.3" fill="#1a1400" letter-spacing="-.2">Falcon</text><rect x="630.3" y="516" width="33.3" height="11.8" rx="5.9" fill="url(#pill)" stroke="#6b5a08" stroke-width=".9"/><text x="646.9499999999999" y="525.1" text-anchor="middle" font-family="DejaVu Sans,Liberation Sans,sans-serif" font-size="9.3" fill="#1a1400" letter-spacing="-.2">Dog</text><rect x="634.7" y="509.7" width="24" height="23.7" fill="none" stroke="#fff" stroke-opacity=".75" stroke-width=".8"/><path d="M646.7 520.7L638.2 456" stroke="#c9f26a" stroke-width="1.3" fill="none"/><path d="M646.7 520.7L667.6 489.5" stroke="#8cc6ff" stroke-width="1.4" fill="none"/><path d="M655 521.6L716 527" stroke="#ff7a5a" stroke-width="1.3" fill="none"/><path d="M635.6 435.9L630.9 455.6Q637.6 459.4 644.6 454.4Z" fill="#8ff03a"/><path d="M635.6 435.9L639.5 457.2Q642.6 456.4 644.6 454.4Z" fill="#6fd224"/><circle cx="668.2" cy="488.3" r="5" fill="#4f9af5"/><path d="M668.5 483.2L672.3 480.8L672.6 488.6Z" fill="#1a3f9a"/><path d="M735.4 529.5L716.4 522Q713.6 527.8 715.6 533.9Z" fill="#f04a25"/><path d="M735.4 529.5L716.4 522Q715.2 524 715 526.6Z" fill="#ff6a40"/><g filter="url(#sh)" opacity=".85"><circle cx="616" cy="280.4" r="17.6" fill="#2e2a27"/><path d="M616.0 255.8L616.0 240.4M625.0 258.4L627.3 252.7M632.5 263.5L641.6 254.4M637.6 271.0L643.3 268.7M640.2 280.0L655.6 280.0M637.6 289.0L643.3 291.3M632.5 296.5L641.6 305.6M625.0 301.6L627.3 307.3M616.0 304.2L616.0 319.6M607.0 301.6L604.7 307.3M599.5 296.5L590.4 305.6M594.4 289.0L588.7 291.3M591.8 280.0L576.4 280.0M594.4 271.0L588.7 268.7M599.5 263.5L590.4 254.4M607.0 258.4L604.7 252.7" transform="translate(0 .4)" stroke="#2e2a27" stroke-width="7.4" stroke-linecap="round" fill="none"/></g><circle cx="616" cy="280" r="16.5" fill="#fdf1d6"/><path d="M616.0 255.8L616.0 240.4M625.0 258.4L627.3 252.7M632.5 263.5L641.6 254.4M637.6 271.0L643.3 268.7M640.2 280.0L655.6 280.0M637.6 289.0L643.3 291.3M632.5 296.5L641.6 305.6M625.0 301.6L627.3 307.3M616.0 304.2L616.0 319.6M607.0 301.6L604.7 307.3M599.5 296.5L590.4 305.6M594.4 289.0L588.7 291.3M591.8 280.0L576.4 280.0M594.4 271.0L588.7 268.7M599.5 263.5L590.4 254.4M607.0 258.4L604.7 252.7" stroke="#fdf1d6" stroke-width="5.1" stroke-linecap="round" fill="none"/><path d="M963 149.4H979M963 152.5H979" stroke="#3c4448" stroke-width="1"/><text x="1013.3" y="159.6" text-anchor="middle" font-family="Liberation Sans,sans-serif" font-size="11.5" fill="#ffffff">y</text><text x="1048.3" y="198.6" text-anchor="middle" font-family="Liberation Sans,sans-serif" font-size="11.5" fill="#ffffff">x</text><g opacity=".55"><path d="M1044.6 161V159.4A2 2 0 0 1 1048.4 158.6" fill="none" stroke="#d9d9d9" stroke-width="1"/><rect x="1044" y="161" width="6" height="4.4" fill="#d0d0d0"/></g><path d="M989 185.6Q987.4 191 989.4 196.7L1007.6 192.6Z" fill="#fdfdfd"/><path d="M989.4 196.7L1007.6 192.6L990 193.4Z" fill="#b9bcc0"/><ellipse cx="1009.6" cy="211.2" rx="9.8" ry="7.5" fill="#e8e8ea"/><path d="M1001 207.6L1012.8 198L1018.6 206.4Q1015 214 1015.6 215.5Q1009 203 1001 207.6Z" fill="#e8e8ea"/><path d="M1004.6 205L1012.8 198L1016 208.4Q1010 203.6 1004.6 205Z" fill="#70747c"/><rect x="1007.7" y="185" width="14.4" height="16.2" fill="#e9ebee"/><path d="M1007.7 190.4L1010 185H1021.2L1022.1 190.4Z" fill="#b8bcc4"/><path d="M1007.7 164.6Q1015 162.6 1022.4 164.6L1015 184.8Z" fill="#74c842"/><path d="M1015 184.8L1016 164L1022.4 164.6Z" fill="#5fae36"/><circle cx="1019.4" cy="182.3" r="3.4" fill="#4a8df2"/><path d="M1024 193.5L1043.3 189Q1045 195 1043.3 201.3Z" fill="#f2593d"/><path d="M1024 193.5L1043.3 201.3L1043.9 197Z" fill="#c9442c"/><path d="M999.9 238.9L990.4 243.5L999.9 248.1M990.4 243.5H999.9" fill="none" stroke="#d4d4d4" stroke-width=".9"/><text x="1003.2" y="247.7" font-family="Liberation Sans,sans-serif" font-size="12" letter-spacing=".3" fill="#d2d2d2">Persp</text></svg><div class="a" style="left:449px;top:143px;width:38px;height:147px;border-radius:4px;background:linear-gradient(#272d32 0,#262b30 14%,#1f2224 45%,#191919 100%)"></div><div class="a" style="left:460px;top:149px;width:16px;height:1px;background:#4a4f54"></div><div class="a" style="left:460px;top:152.2px;width:16px;height:1px;background:#4a4f54"></div><div class="a" style="left:452px;top:161px;width:32px;height:20px;background:#585858;border-radius:3px 3px 0 0"></div><div class="a" style="left:452px;top:182px;width:32px;height:20px;background:#46607c;border-radius:0"></div><div class="a" style="left:452px;top:203px;width:32px;height:20px;background:#585858;border-radius:0"></div><div class="a" style="left:452px;top:224px;width:32px;height:20px;background:#585858;border-radius:0"></div><div class="a" style="left:452px;top:245px;width:32px;height:20px;background:#585858;border-radius:0"></div><div class="a" style="left:452px;top:266px;width:32px;height:20px;background:#585858;border-radius:0 0 3px 3px"></div><svg class="a" style="left:460px;top:162px;" width="16" height="17" viewBox="0 0 16 17"><g stroke="#d2d2d2" stroke-linecap="round" fill="none"><path d="M1.7 7.9L4.6 11.8" stroke-width="2"/><path d="M4.9 2.5L5.6 9" stroke-width="1.8"/><path d="M8.2 1.6V9" stroke-width="1.8"/><path d="M11.4 2.7L10.9 9" stroke-width="1.8"/><path d="M14.2 5.7L12.6 10.4" stroke-width="1.7"/></g><path d="M4.6 8.2H12.2L13.5 10L11.7 16H5.3L3 11Z" fill="#d2d2d2"/></svg><svg class="a" style="left:460px;top:184px;" width="16" height="16" viewBox="0 0 16 16"><path d="M8 2.6V6.2M8 9.8V13.4M2.6 8H6.2M9.8 8H13.4" stroke="#a9b8cb" stroke-width="1.5" fill="none"/><path d="M5.4 3.2L8 0.6L10.6 3.2M5.4 12.8L8 15.4L10.6 12.8M3.2 5.4L0.6 8L3.2 10.6M12.8 5.4L15.4 8L12.8 10.6" stroke="#f2f2f2" stroke-width="1.5" fill="none"/></svg><svg class="a" style="left:460px;top:205px;" width="16" height="16" viewBox="0 0 16 16"><path d="M7.6 1.4A6.5 6.5 0 0 0 3.6 12.8" fill="none" stroke="#d2d2d2" stroke-width="1.2"/><path d="M8.4 14.4A6.5 6.5 0 0 0 11.4 2.4" fill="none" stroke="#d2d2d2" stroke-width="1.2"/><path d="M1.2 13.6H5.7V9.4" fill="none" stroke="#d2d2d2" stroke-width="1.3"/><path d="M14.8 1.4H10.3V5.6" fill="none" stroke="#d2d2d2" stroke-width="1.3"/></svg><svg class="a" style="left:460px;top:226px;" width="16" height="16" viewBox="0 0 16 16"><rect x="1.4" y="1.6" width="13" height="13" fill="none" stroke="#d2d2d2" stroke-width="1.1"/><rect x="1.4" y="10.6" width="4" height="4" fill="none" stroke="#d2d2d2" stroke-width="1.1"/><path d="M6.6 9.4L11.6 4.4M8 4.2H11.8V8" fill="none" stroke="#d2d2d2" stroke-width="1.1"/></svg><svg class="a" style="left:460px;top:247px;" width="16" height="16" viewBox="0 0 16 16"><path d="M4.4 2.4H11.6M4.4 13.6H11.6M2.4 4.4V11.6M13.6 4.4V11.6" stroke="#d2d2d2" stroke-width="1.1"/><rect x="1" y="1" width="2.8" height="2.8" fill="#d2d2d2"/><rect x="12.2" y="1" width="2.8" height="2.8" fill="#d2d2d2"/><rect x="1" y="12.2" width="2.8" height="2.8" fill="#d2d2d2"/><rect x="12.2" y="12.2" width="2.8" height="2.8" fill="#d2d2d2"/></svg><svg class="a" style="left:460px;top:268px;" width="16" height="16" viewBox="0 0 16 16"><path d="M3 3.6A6.6 6.6 0 0 1 11 1.9M13.4 5A6.6 6.6 0 0 1 12.6 12.6M11 14.2A6.6 6.6 0 0 1 3.2 12.6M1.6 10.6A6.6 6.6 0 0 1 1.8 5.6" fill="none" stroke="#d2d2d2" stroke-width="1"/><path d="M8 3V13M3 8H13" stroke="#a8a8a8" stroke-width="1.2"/><path d="M8 2L9.6 4.2H6.4ZM8 14L9.6 11.8H6.4ZM2 8L4.2 6.4V9.6ZM14 8L11.8 6.4V9.6Z" fill="#a8a8a8"/><path d="M12.4 0.6H15.6V3.8Z" fill="#d2d2d2"/><path d="M0.4 12.4V15.6H3.6Z" fill="#d2d2d2"/></svg><div class="tabs" style="left:1072px;top:96px;width:559px;height:19px;"></div><div class="tab" style="left:1072px;top:96px;width:74px;height:19px;left:1072px;top:96px"></div><svg class="a" style="left:1079px;top:103.2px;" width="14" height="7" viewBox="0 0 14 7"><rect x="0" y="0" width="14" height="6.8" rx="3.4" fill="#c4c4c4"/><path d="M3.6 1.6V5.2M1.8 3.4H5.4" stroke="#3c3c3c" stroke-width="1.1"/><circle cx="9.4" cy="4.4" r=".9" fill="#3c3c3c"/><circle cx="11.4" cy="2.5" r=".9" fill="#3c3c3c"/></svg><div class="t " style="left:1096.5px;top:99px;">Game</div><svg class="a" style="left:1616.5px;top:100px;" width="3" height="10" viewBox="0 0 3 10"><rect x=".5" y="0" width="2" height="2" fill="#c4c4c4"/><rect x=".5" y="3.8" width="2" height="2" fill="#c4c4c4"/><rect x=".5" y="7.6" width="2" height="2" fill="#c4c4c4"/></svg><div class="tb" style="left:1072px;top:115px;width:559px;height:20px;"></div><div class="a" style="left:1072px;top:135px;width:559px;height:1px;background:#232323"></div><div class="sep" style="left:1162.5px;top:115px;width:1px;height:20px;background:#2a2a2a"></div><div class="sep" style="left:1248px;top:115px;width:1px;height:20px;background:#2a2a2a"></div><div class="sep" style="left:1408.3px;top:115px;width:1px;height:20px;background:#2a2a2a"></div><div class="sep" style="left:1530.3px;top:115px;width:1px;height:20px;background:#2a2a2a"></div><div class="t " style="left:1076.3px;top:117.5px;">Game</div><svg class="a" style="left:1150.5px;top:123.4px;" width="7" height="4" viewBox="0 0 7 4"><path d="M0 0H7L3.5 4Z" fill="#c4c4c4"/></svg><div class="t " style="left:1172.3px;top:117.5px;">Display 1</div><svg class="a" style="left:1236.5px;top:123.4px;" width="7" height="4" viewBox="0 0 7 4"><path d="M0 0H7L3.5 4Z" fill="#c4c4c4"/></svg><div class="t " style="left:1252px;top:117.5px;">Free Aspect</div><svg class="a" style="left:1396.3px;top:123.4px;" width="7" height="4" viewBox="0 0 7 4"><path d="M0 0H7L3.5 4Z" fill="#c4c4c4"/></svg><div class="t " style="left:1415.2px;top:117.5px;">Scale</div><div class="a" style="left:1458px;top:125.8px;width:25px;height:1.4px;background:#5e5e5e"></div><div class="a" style="left:1453px;top:121.3px;width:10px;height:10px;border-radius:50%;background:#999"></div><div class="t " style="left:1489.4px;top:117.5px;">1x</div><div class="t " style="left:1534px;top:117.5px;">Play Focused</div><svg class="a" style="left:1626px;top:123.4px;overflow:hidden" width="5" height="4" viewBox="0 0 5 4"><path d="M0 0H7L3.5 4Z" fill="#c4c4c4"/></svg><svg class="a" style="left:1072px;top:136px;overflow:hidden" width="559" height="763" viewBox="1072 136 559 763"><defs><linearGradient id="gsky" x1="0" y1="136" x2="0" y2="169" gradientUnits="userSpaceOnUse" gradientTransform="rotate(-0.45 1350 150)">
<stop offset="0" stop-color="#d9eff0"/><stop offset=".2" stop-color="#cfe4e5"/><stop offset=".45" stop-color="#b4c4c5"/><stop offset=".7" stop-color="#8d9696"/><stop offset=".88" stop-color="#747271"/><stop offset="1" stop-color="#6d6663"/></linearGradient>
<linearGradient id="ggr" x1="0" y1="166" x2="0" y2="898" gradientUnits="userSpaceOnUse"><stop offset="0" stop-color="#6d6663"/><stop offset=".3" stop-color="#6a625e"/><stop offset="1" stop-color="#69605b"/></linearGradient>
<linearGradient id="gfr" x1="0" y1="0" x2="0" y2="1"><stop offset="0" stop-color="#f6fbfe"/><stop offset="1" stop-color="#eef6fc"/></linearGradient></defs><rect x="1072" y="136" width="559" height="763" fill="url(#ggr)"/><rect x="1060" y="130" width="590" height="44" fill="url(#gsky)"/><polygon points="1168.0,500.7 1189.8,473.2 1196.3,520.2 1175.1,550.6" fill="#d2d8e1" stroke="#d2d8e1" stroke-width=".8" stroke-linejoin="round"/><polygon points="1111.1,496.4 1168.0,500.7 1175.1,550.6 1121.5,545.6" fill="url(#gfr)" stroke="#f4f9fd" stroke-width=".8" stroke-linejoin="round"/><polygon points="1137.5,469.0 1189.8,473.2 1168.0,500.7 1111.1,496.4" fill="#ffffff" /><polygon points="1284.4,510.9 1297.9,482.2 1300.5,529.2 1286.5,561.7" fill="#dde3ea" stroke="#dde3ea" stroke-width=".8" stroke-linejoin="round"/><polygon points="1225.0,505.5 1284.4,510.9 1286.5,561.7 1230.0,555.9" fill="url(#gfr)" stroke="#f4f9fd" stroke-width=".8" stroke-linejoin="round"/><polygon points="1243.4,478.0 1297.9,482.2 1284.4,510.9 1225.0,505.5" fill="#ffffff" /><polygon points="1406.3,521.2 1412.0,491.2 1409.5,539.6 1403.9,572.4" fill="#f3f7fb" stroke="#f3f7fb" stroke-width=".8" stroke-linejoin="round"/><polygon points="1343.9,515.8 1406.3,521.2 1403.9,572.4 1344.2,566.8" fill="url(#gfr)" stroke="#f4f9fd" stroke-width=".8" stroke-linejoin="round"/><polygon points="1354.3,487.0 1412.0,491.2 1406.3,521.2 1343.9,515.8" fill="#ffffff" /><polygon points="1471.1,496.1 1469.6,526.8 1464.6,578.3 1468.2,540.0" fill="#b9c6da" stroke="#b9c6da" stroke-width=".8" stroke-linejoin="round"/><polygon points="1469.6,526.8 1535.7,532.3 1526.9,584.7 1464.6,578.3" fill="url(#gfr)" stroke="#f4f9fd" stroke-width=".8" stroke-linejoin="round"/><polygon points="1471.1,496.1 1531.5,500.5 1535.7,532.3 1469.6,526.8" fill="#ffffff" /></svg><div class="tabs" style="left:1633px;top:96px;width:485px;height:19px;"></div><div class="tab" style="left:1633px;top:96px;width:93px;height:19px;left:1633px;top:96px"></div><svg class="a" style="left:1642px;top:101px;" width="10" height="10" viewBox="0 0 10 10"><circle cx="5" cy="5" r="5" fill="#c4c4c4"/><rect x="4.1" y="4.2" width="1.8" height="3.8" fill="#3c3c3c"/><rect x="4.1" y="1.9" width="1.8" height="1.6" fill="#3c3c3c"/></svg><div class="t " style="left:1657.3px;top:99px;">Inspector</div><svg class="a" style="left:2082.5px;top:99.5px;" width="10" height="11" viewBox="0 0 10 11"><path d="M2.6 5.2V3.4A2.4 2.4 0 0 1 7.2 2.6" fill="none" stroke="#c4c4c4" stroke-width="1.1"/><rect x="1.2" y="5.3" width="7.4" height="4.4" rx=".6" fill="none" stroke="#c4c4c4" stroke-width="1.1"/></svg><svg class="a" style="left:2103.5px;top:100px;" width="3" height="10" viewBox="0 0 3 10"><rect x=".5" y="0" width="2" height="2" fill="#c4c4c4"/><rect x=".5" y="3.8" width="2" height="2" fill="#c4c4c4"/><rect x=".5" y="7.6" width="2" height="2" fill="#c4c4c4"/></svg><div class="pn" style="left:1633px;top:115px;width:485px;height:1338px;"></div><div class="a" style="left:1633px;top:115px;width:485px;height:59px;background:#3c3c3c"></div><svg class="a" style="left:1640.5px;top:125.4px;" width="21" height="22" viewBox="0 0 21 22"><path d="M10.2 1L19.4 5.4V16.2L10.2 21L1 16.2V5.4Z M1.2 5.6L10.2 10.2L19.2 5.6 M10.2 10.2V20.8" fill="none" stroke="#c8c8c8" stroke-width="1.6" stroke-linejoin="round"/></svg><svg class="a" style="left:1659.8px;top:146.0px;" width="7" height="4" viewBox="0 0 7 4"><path d="M0 0H7L3.5 4Z" fill="#c4c4c4"/></svg><div class="fld" style="left:1680px;top:126.3px;width:14px;height:14px;border-radius:3px;background:#2a2a2a;border-color:#1e1e1e"></div><svg class="a" style="left:1682.6px;top:129.7px;" width="9" height="7.4" viewBox="0 0 9 7.4"><path d="M0.8 3.8L3.4 6.2L8.2 0.8" fill="none" stroke="#e0e0e0" stroke-width="1.5"/></svg><div class="fld" style="left:1700.5px;top:124.3px;width:338.3px;height:17.4px;"></div><div class="t " style="left:1703.2px;top:125.3px;color:#e8e8e8;letter-spacing:.42px;-webkit-text-stroke:.2px #e8e8e8">Manager</div><div class="fld" style="left:2042.4px;top:126px;width:14px;height:14px;border-radius:3px;background:#2a2a2a;border-color:#1e1e1e"></div><div class="t " style="left:2060.3px;top:125.3px;">Static</div><svg class="a" style="left:2105.3px;top:131.4px;" width="7" height="4" viewBox="0 0 7 4"><path d="M0 0H7L3.5 4Z" fill="#c4c4c4"/></svg><div class="t " style="left:1674px;top:149.5px;">Tag</div><div class="dd" style="left:1700px;top:149px;width:187.3px;height:16.4px;"></div><div class="t " style="left:1703.2px;top:148.8px;color:#e0e0e0">Untagged</div><svg class="a" style="left:1874.5px;top:155.3px;" width="7" height="4" viewBox="0 0 7 4"><path d="M0 0H7L3.5 4Z" fill="#c4c4c4"/></svg><div class="t " style="left:1900.4px;top:149.5px;">Layer</div><div class="dd" style="left:1937px;top:149px;width:177.4px;height:16.4px;"></div><div class="t " style="left:1940.2px;top:148.8px;color:#e0e0e0">Default</div><svg class="a" style="left:2101.5px;top:155.3px;" width="7" height="4" viewBox="0 0 7 4"><path d="M0 0H7L3.5 4Z" fill="#c4c4c4"/></svg><div class="a" style="left:1633px;top:174px;width:485px;height:1px;background:#1a1a1a"></div><div class="a" style="left:1633px;top:175px;width:485px;height:20.5px;background:#3e3e3e"></div><svg class="a" style="left:1639.6px;top:181.4px;" width="9" height="8" viewBox="0 0 9 8"><path d="M0 0H8.8L4.4 8Z" fill="#6c6c6c"/></svg><svg class="a" style="left:2060.4px;top:179.7px;" width="11" height="11" viewBox="0 0 11 11"><circle cx="5.5" cy="5.5" r="5.5" fill="#c4c4c4"/><path d="M3.7 4.3A1.9 1.9 0 1 1 6.4 5.8Q5.5 6.3 5.5 7.2" fill="none" stroke="#3e3e3e" stroke-width="1.4"/><rect x="4.8" y="8" width="1.4" height="1.3" fill="#3e3e3e"/></svg><svg class="a" style="left:2080px;top:179.5px;" width="12" height="12" viewBox="0 0 12 12"><path d="M0 3.4H7M9.6 3.4H12M0 8.6H2.6M5.2 8.6H12" stroke="#c4c4c4" stroke-width="1.2"/><path d="M8.3 1V5.8M3.9 6.2V11" stroke="#c4c4c4" stroke-width="1.4"/></svg><svg class="a" style="left:2104.5px;top:180.2px;" width="3" height="10" viewBox="0 0 3 10"><rect x=".5" y="0" width="2" height="2" fill="#c4c4c4"/><rect x=".5" y="3.8" width="2" height="2" fill="#c4c4c4"/><rect x=".5" y="7.6" width="2" height="2" fill="#c4c4c4"/></svg><svg class="a" style="left:1654.6px;top:179px;" width="14" height="13" viewBox="0 0 14 13"><path d="M6.2 1.4V4.6" stroke="#a6e84a" stroke-width="2.2" stroke-linecap="round"/><path d="M4.8 7.9L1.8 9.8" stroke="#52c4f5" stroke-width="2.2" stroke-linecap="round"/><path d="M7.8 7.9L10.8 9.8" stroke="#f2683c" stroke-width="2.2" stroke-linecap="round"/></svg><div class="t b" style="left:1693.7px;top:177.8px;color:#e4e4e4;letter-spacing:.2px">Transform</div><div class="t " style="left:1652.3px;top:201.5px;">Position</div><div class="t " style="left:1833.3px;top:201.5px;">X</div><div class="fld" style="left:1847.2px;top:200.6px;width:76.4px;height:17px;"></div><div class="t " style="left:1850.2px;top:201.5px;color:#e0e0e0">0</div><div class="t " style="left:1928.3px;top:201.5px;">Y</div><div class="fld" style="left:1942.2px;top:200.6px;width:76.4px;height:17px;"></div><div class="t " style="left:1945.2px;top:201.5px;color:#e0e0e0">0</div><div class="t " style="left:2024.4px;top:201.5px;">Z</div><div class="fld" style="left:2038.1px;top:200.6px;width:76.5px;height:17px;"></div><div class="t " style="left:2041.1px;top:201.5px;color:#e0e0e0">0</div><div class="t " style="left:1652.3px;top:221.5px;">Rotation</div><div class="t " style="left:1833.3px;top:221.5px;">X</div><div class="fld" style="left:1847.2px;top:220.6px;width:76.4px;height:17px;"></div><div class="t " style="left:1850.2px;top:221.5px;color:#e0e0e0">0</div><div class="t " style="left:1928.3px;top:221.5px;">Y</div><div class="fld" style="left:1942.2px;top:220.6px;width:76.4px;height:17px;"></div><div class="t " style="left:1945.2px;top:221.5px;color:#e0e0e0">0</div><div class="t " style="left:2024.4px;top:221.5px;">Z</div><div class="fld" style="left:2038.1px;top:220.6px;width:76.5px;height:17px;"></div><div class="t " style="left:2041.1px;top:221.5px;color:#e0e0e0">0</div><div class="t " style="left:1652.3px;top:241.5px;">Scale</div><div class="t " style="left:1833.3px;top:241.5px;">X</div><div class="fld" style="left:1847.2px;top:240.6px;width:76.4px;height:17px;"></div><div class="t " style="left:1850.2px;top:241.5px;color:#e0e0e0">1</div><div class="t " style="left:1928.3px;top:241.5px;">Y</div><div class="fld" style="left:1942.2px;top:240.6px;width:76.4px;height:17px;"></div><div class="t " style="left:1945.2px;top:241.5px;color:#e0e0e0">1</div><div class="t " style="left:2024.4px;top:241.5px;">Z</div><div class="fld" style="left:2038.1px;top:240.6px;width:76.5px;height:17px;"></div><div class="t " style="left:2041.1px;top:241.5px;color:#e0e0e0">1</div><svg class="a" style="left:1810.8px;top:244.4px;" width="13" height="10" viewBox="0 0 13 10"><path d="M5.2 2.2H3.2A2.6 2.6 0 0 0 3.2 7.6H5.2M7.8 2.2H9.6A2.6 2.6 0 0 1 9.6 7.6H7.8" fill="none" stroke="#c4c4c4" stroke-width="1.1"/><path d="M1 0.4L11.6 9.4" stroke="#c4c4c4" stroke-width="1.1"/></svg><div class="a" style="left:1633px;top:267px;width:485px;height:1px;background:#1a1a1a"></div><div class="a" style="left:1633px;top:268px;width:485px;height:20.5px;background:#3e3e3e"></div><svg class="a" style="left:1639.6px;top:274.4px;" width="9" height="8" viewBox="0 0 9 8"><path d="M0 0H8.8L4.4 8Z" fill="#6c6c6c"/></svg><svg class="a" style="left:2060.4px;top:272.7px;" width="11" height="11" viewBox="0 0 11 11"><circle cx="5.5" cy="5.5" r="5.5" fill="#c4c4c4"/><path d="M3.7 4.3A1.9 1.9 0 1 1 6.4 5.8Q5.5 6.3 5.5 7.2" fill="none" stroke="#3e3e3e" stroke-width="1.4"/><rect x="4.8" y="8" width="1.4" height="1.3" fill="#3e3e3e"/></svg><svg class="a" style="left:2080px;top:272.5px;" width="12" height="12" viewBox="0 0 12 12"><path d="M0 3.4H7M9.6 3.4H12M0 8.6H2.6M5.2 8.6H12" stroke="#c4c4c4" stroke-width="1.2"/><path d="M8.3 1V5.8M3.9 6.2V11" stroke="#c4c4c4" stroke-width="1.4"/></svg><svg class="a" style="left:2104.5px;top:273.2px;" width="3" height="10" viewBox="0 0 3 10"><rect x=".5" y="0" width="2" height="2" fill="#c4c4c4"/><rect x=".5" y="3.8" width="2" height="2" fill="#c4c4c4"/><rect x=".5" y="7.6" width="2" height="2" fill="#c4c4c4"/></svg><svg class="a" style="left:1654.8px;top:271px;" width="12" height="14.2" viewBox="0 0 12 14.2"><path d="M0.6 1.2Q0.6 0.4 1.4 0.4H8.2L11.4 3.6V13Q11.4 13.8 10.6 13.8H1.4Q0.6 13.8 0.6 13Z" fill="#f4f4f4"/><path d="M8.2 0.4V3.6H11.4Z" fill="#c8c8c8"/><path d="M4.4 4.6L3.6 11.4M7.6 4.6L6.8 11.4M2.6 6.6H9.2M2.2 9.4H8.8" stroke="#2e9a3c" stroke-width="1.2" fill="none"/></svg><div class="fld" style="left:1673.2px;top:271.2px;width:14px;height:14px;border-radius:3px;background:#2a2a2a;border-color:#1e1e1e"></div><svg class="a" style="left:1675.8px;top:274.59999999999997px;" width="9" height="7.4" viewBox="0 0 9 7.4"><path d="M0.8 3.8L3.4 6.2L8.2 0.8" fill="none" stroke="#e0e0e0" stroke-width="1.5"/></svg><div class="t b" style="left:1693.7px;top:271.2px;color:#e4e4e4;letter-spacing:.28px">Manager (Script)</div><div class="t " style="left:1652.3px;top:293px;color:#868686">Script</div><div class="fld" style="left:1832.3px;top:292.5px;width:282.3px;height:16.8px;background:#323232;border-color:#2a2a2a"></div><svg class="a" style="left:1836.4px;top:296px;" width="8" height="10" viewBox="0 0 8 10"><path d="M0.4 0.8Q0.4 0.3 0.9 0.3H5.4L7.6 2.5V9.2Q7.6 9.7 7.1 9.7H0.9Q0.4 9.7 0.4 9.2Z" fill="#8e9a8e"/><path d="M3 3L2.6 7.6M5.2 3L4.8 7.6M1.6 4.4H6.4M1.4 6.2H6.2" stroke="#2d6a36" stroke-width=".9" fill="none"/></svg><div class="t " style="left:1849.5px;top:293px;color:#868686">Manager</div><div class="a" style="left:2096px;top:293.5px;width:1px;height:14.8px;background:#2c2c2c"></div><svg class="a" style="left:2100.2px;top:296.5px;" width="9" height="9" viewBox="0 0 9 9"><circle cx="4.5" cy="4.5" r="3.8" fill="none" stroke="#8a8a8a" stroke-width="1"/><circle cx="4.5" cy="4.5" r="1.4" fill="#8a8a8a"/></svg><div class="a" style="left:1633px;top:318px;width:485px;height:1px;background:#1a1a1a"></div><div class="a" style="left:1761.7px;top:327.6px;width:228.6px;height:23px;background:#585858;border:1px solid #4c4c4c;border-bottom-color:#3e3e3e;border-radius:3px;box-sizing:border-box"></div><div class="t " style="left:1761.7px;top:331px;width:228.6px;text-align:center;color:#e8e8e8">Add Component</div><div class="tabs" style="left:56px;top:901px;width:1049px;height:19px;"></div><div class="tab" style="left:56px;top:901px;width:80px;height:19px;left:56px;top:901px;border-radius:0 3px 0 0"></div><svg class="a" style="left:62.6px;top:905.2px;" width="13" height="11" viewBox="0 0 13 11"><path d="M0.4 1.6Q0.4 0.6 1.4 0.6H4.6L6 2.2H11.6Q12.6 2.2 12.6 3.2V9.8Q12.6 10.8 11.6 10.8H1.4Q0.4 10.8 0.4 9.8Z" fill="#c4c4c4"/></svg><div class="t " style="left:79px;top:904px;">Project</div><svg class="a" style="left:1070px;top:904.5px;" width="10" height="11" viewBox="0 0 10 11"><path d="M2.6 5.2V3.4A2.4 2.4 0 0 1 7.2 2.6" fill="none" stroke="#c4c4c4" stroke-width="1.1"/><rect x="1.2" y="5.3" width="7.4" height="4.4" rx=".6" fill="none" stroke="#c4c4c4" stroke-width="1.1"/></svg><svg class="a" style="left:1090.7px;top:905px;" width="3" height="10" viewBox="0 0 3 10"><rect x=".5" y="0" width="2" height="2" fill="#c4c4c4"/><rect x=".5" y="3.8" width="2" height="2" fill="#c4c4c4"/><rect x=".5" y="7.6" width="2" height="2" fill="#c4c4c4"/></svg><div class="tb" style="left:56px;top:920px;width:1049px;height:20px;"></div><div class="a" style="left:56px;top:939.5px;width:1049px;height:1px;background:#232323"></div><svg class="a" style="left:63px;top:924px;" width="12" height="12" viewBox="0 0 12 12"><path d="M6 0V12M0 6H12" stroke="#d0d0d0" stroke-width="2"/></svg><svg class="a" style="left:79.1px;top:928.0px;" width="7.8" height="4.2" viewBox="0 0 7.8 4.2"><path d="M0 0H7.8L3.9 4.2Z" fill="#c4c4c4"/></svg><div class="fld" style="left:647.3px;top:922.6px;width:318px;height:15px;background:#2a2a2a;border-color:#1f1f1f;border-radius:4px"></div><svg class="a" style="left:651.5px;top:926.5px;" width="8" height="8" viewBox="0 0 8 8"><circle cx="3" cy="3" r="2.2" fill="none" stroke="#b0b0b0" stroke-width="1.2"/><path d="M4.7 4.7L7.3 7.3" stroke="#b0b0b0" stroke-width="1.4"/></svg><svg class="a" style="left:949.5px;top:923.8px;" width="12" height="12" viewBox="0 0 12 12"><rect x="3.3" y=".6" width="8.1" height="8.1" rx="1" fill="none" stroke="#c4c4c4" stroke-width="1.1"/><rect x=".6" y="7.2" width="4.2" height="4.2" fill="#2a2a2a" stroke="#c4c4c4" stroke-width="1.1"/><path d="M5.3 6.7L9.2 2.8M6 2.7H9.3V6" fill="none" stroke="#c4c4c4" stroke-width="1.1"/></svg><div class="sep" style="left:967.5px;top:920px;width:1px;height:19.5px;background:#2c2c2c"></div><div class="sep" style="left:993.4px;top:920px;width:1px;height:19.5px;background:#2c2c2c"></div><div class="sep" style="left:1019.4px;top:920px;width:1px;height:19.5px;background:#2c2c2c"></div><div class="sep" style="left:1045.3px;top:920px;width:1px;height:19.5px;background:#2c2c2c"></div><div class="sep" style="left:1071.2px;top:920px;width:1px;height:19.5px;background:#2c2c2c"></div><svg class="a" style="left:974px;top:923.5px;" width="13" height="13" viewBox="0 0 13 13"><rect x="1.8" y="0" width="5.4" height="4.8" fill="#c4c4c4"/><circle cx="3.6" cy="9.2" r="3.4" fill="#c4c4c4"/><path d="M9.2 2.6L12.6 9H5.8Z" fill="#c4c4c4" stroke="#3c3c3c" stroke-width=".8"/></svg><svg class="a" style="left:1000.4px;top:924.4px;" width="12" height="11" viewBox="0 0 12 11"><path d="M5.4 0.6L11 0.4L11.2 5.6L5.8 10.6L0.6 5.6Z" fill="#c4c4c4" transform="rotate(8 6 5.5)"/><circle cx="8.8" cy="2.8" r="1" fill="#3c3c3c"/></svg><svg class="a" style="left:1025.6px;top:923.4px;" width="13" height="13" viewBox="0 0 13 13"><path d="M3.9 0.3H9.1L12.7 3.9V9.1L9.1 12.7H3.9L0.3 9.1V3.9Z" fill="#d6d6d6"/><rect x="5.6" y="2.6" width="1.8" height="5.2" fill="#3c3c3c"/><rect x="5.6" y="8.8" width="1.8" height="1.8" fill="#3c3c3c"/></svg><svg class="a" style="left:1052.3px;top:924px;" width="12" height="11.5" viewBox="0 0 12 11.5"><path d="M6 0L7.5 4.2L12 4.4L8.5 7.2L9.7 11.5L6 9.1L2.3 11.5L3.5 7.2L0 4.4L4.5 4.2Z" fill="#8c8c8c"/></svg><svg class="a" style="left:1076.3px;top:923.6px;" width="16" height="13" viewBox="0 0 16 13"><path d="M0.8 6.8Q7.6 -1.2 14.6 6.8Q7.6 14.2 0.8 6.8Z" fill="none" stroke="#c4c4c4" stroke-width="1.1"/><circle cx="7.7" cy="6.7" r="2.1" fill="none" stroke="#c4c4c4" stroke-width="1"/><path d="M1.8 12.3L13.8 0.8" stroke="#c4c4c4" stroke-width="1.2"/></svg><div class="t " style="left:1092px;top:922.6px;color:#c4c4c4">6</div><div class="pn" style="left:56px;top:940px;width:504px;height:513px;"></div><div class="a" style="left:560px;top:940px;width:1px;height:513px;background:#232323"></div><div class="a" style="left:56px;top:1020.3px;width:504px;height:16px;background:#4d4d4d"></div><svg class="a" style="left:60.4px;top:945.2px;" width="9" height="8" viewBox="0 0 9 8"><path d="M0 0H8.8L4.4 8Z" fill="#6c6c6c"/></svg><svg class="a" style="left:74px;top:943.2px;" width="12" height="11.5" viewBox="0 0 12 11.5"><path d="M6 0L7.5 4.2L12 4.4L8.5 7.2L9.7 11.5L6 9.1L2.3 11.5L3.5 7.2L0 4.4L4.5 4.2Z" fill="#c8c8c8"/></svg><div class="t b" style="left:91.3px;top:941.3px;color:#dcdcdc;letter-spacing:.3px">Favorites</div><svg class="a" style="left:87.8px;top:959.2px;" width="13" height="13" viewBox="0 0 13 13"><circle cx="5" cy="5" r="4" fill="none" stroke="#c4c4c4" stroke-width="1.1"/><path d="M8 8L11.6 11.8" stroke="#c4c4c4" stroke-width="1.7"/></svg><div class="t " style="left:104.2px;top:957.2px;">All Materials</div><svg class="a" style="left:87.8px;top:975.2px;" width="13" height="13" viewBox="0 0 13 13"><circle cx="5" cy="5" r="4" fill="none" stroke="#c4c4c4" stroke-width="1.1"/><path d="M8 8L11.6 11.8" stroke="#c4c4c4" stroke-width="1.7"/></svg><div class="t " style="left:104.2px;top:973.2px;">All Models</div><svg class="a" style="left:87.8px;top:991.2px;" width="13" height="13" viewBox="0 0 13 13"><circle cx="5" cy="5" r="4" fill="none" stroke="#c4c4c4" stroke-width="1.1"/><path d="M8 8L11.6 11.8" stroke="#c4c4c4" stroke-width="1.7"/></svg><div class="t " style="left:104.2px;top:989.2px;">All Prefabs</div><svg class="a" style="left:60.4px;top:1024px;" width="9" height="8" viewBox="0 0 9 8"><path d="M0 0H8.8L4.4 8Z" fill="#6c6c6c"/></svg><svg class="a" style="left:73.6px;top:1022.4px;" width="14" height="11.5" viewBox="0 0 14 11.5"><path d="M0.5 1.5Q0.5 0.6 1.4 0.6H4.4L5.8 2.1H10.6Q11.5 2.1 11.5 3V4.2H3.4L0.5 9.6Z" fill="#dadada"/><path d="M3.9 4.9H13.6L10.9 10.9H1.1Z" fill="#dadada"/></svg><div class="t b" style="left:91.3px;top:1019.8px;color:#e6e6e6;letter-spacing:.3px">Assets</div><svg class="a" style="left:87.8px;top:1039px;" width="13" height="11" viewBox="0 0 13 11"><path d="M0.4 1.6Q0.4 0.6 1.4 0.6H4.6L6 2.2H11.6Q12.6 2.2 12.6 3.2V9.8Q12.6 10.8 11.6 10.8H1.4Q0.4 10.8 0.4 9.8Z" fill="#c4c4c4"/></svg><div class="t " style="left:104.2px;top:1036.1px;">Scenes</div><svg class="a" style="left:60.8px;top:1055.6px;" width="8" height="9" viewBox="0 0 8 9"><path d="M0 0V8.8L8 4.4Z" fill="#6c6c6c"/></svg><svg class="a" style="left:73.8px;top:1055px;" width="13" height="11" viewBox="0 0 13 11"><path d="M0.4 1.6Q0.4 0.6 1.4 0.6H4.6L6 2.2H11.6Q12.6 2.2 12.6 3.2V9.8Q12.6 10.8 11.6 10.8H1.4Q0.4 10.8 0.4 9.8Z" fill="#c8c8c8"/></svg><div class="t b" style="left:91.3px;top:1052.1px;color:#dcdcdc;letter-spacing:.3px">Packages</div><div class="a" style="left:561px;top:940px;width:544px;height:513px;background:#333333"></div><div class="a" style="left:561px;top:940px;width:544px;height:22px;background:#414141"></div><div class="t b" style="left:565.3px;top:942.8px;color:#c4c4c4;letter-spacing:.3px">Assets</div><svg class="a" style="left:579px;top:963.6px;" width="12" height="14.2" viewBox="0 0 12 14.2"><path d="M0.6 1.2Q0.6 0.4 1.4 0.4H8.2L11.4 3.6V13Q11.4 13.8 10.6 13.8H1.4Q0.6 13.8 0.6 13Z" fill="#f4f4f4"/><path d="M8.2 0.4V3.6H11.4Z" fill="#c8c8c8"/><path d="M4.4 4.6L3.6 11.4M7.6 4.6L6.8 11.4M2.6 6.6H9.2M2.2 9.4H8.8" stroke="#2e9a3c" stroke-width="1.2" fill="none"/></svg><div class="t " style="left:595.3px;top:962.6px;">Animal</div><svg class="a" style="left:579px;top:979.6px;" width="12" height="14.2" viewBox="0 0 12 14.2"><path d="M0.6 1.2Q0.6 0.4 1.4 0.4H8.2L11.4 3.6V13Q11.4 13.8 10.6 13.8H1.4Q0.6 13.8 0.6 13Z" fill="#f4f4f4"/><path d="M8.2 0.4V3.6H11.4Z" fill="#c8c8c8"/><path d="M4.4 4.6L3.6 11.4M7.6 4.6L6.8 11.4M2.6 6.6H9.2M2.2 9.4H8.8" stroke="#2e9a3c" stroke-width="1.2" fill="none"/></svg><div class="t " style="left:595.3px;top:978.6px;">Cat</div><svg class="a" style="left:579px;top:995.6px;" width="12" height="14.2" viewBox="0 0 12 14.2"><path d="M0.6 1.2Q0.6 0.4 1.4 0.4H8.2L11.4 3.6V13Q11.4 13.8 10.6 13.8H1.4Q0.6 13.8 0.6 13Z" fill="#f4f4f4"/><path d="M8.2 0.4V3.6H11.4Z" fill="#c8c8c8"/><path d="M4.4 4.6L3.6 11.4M7.6 4.6L6.8 11.4M2.6 6.6H9.2M2.2 9.4H8.8" stroke="#2e9a3c" stroke-width="1.2" fill="none"/></svg><div class="t " style="left:595.3px;top:994.6px;">Dog</div><svg class="a" style="left:579px;top:1011.6px;" width="12" height="14.2" viewBox="0 0 12 14.2"><path d="M0.6 1.2Q0.6 0.4 1.4 0.4H8.2L11.4 3.6V13Q11.4 13.8 10.6 13.8H1.4Q0.6 13.8 0.6 13Z" fill="#f4f4f4"/><path d="M8.2 0.4V3.6H11.4Z" fill="#c8c8c8"/><path d="M4.4 4.6L3.6 11.4M7.6 4.6L6.8 11.4M2.6 6.6H9.2M2.2 9.4H8.8" stroke="#2e9a3c" stroke-width="1.2" fill="none"/></svg><div class="t " style="left:595.3px;top:1010.6px;">Falcon</div><svg class="a" style="left:579px;top:1027.6px;" width="12" height="14.2" viewBox="0 0 12 14.2"><path d="M0.6 1.2Q0.6 0.4 1.4 0.4H8.2L11.4 3.6V13Q11.4 13.8 10.6 13.8H1.4Q0.6 13.8 0.6 13Z" fill="#f4f4f4"/><path d="M8.2 0.4V3.6H11.4Z" fill="#c8c8c8"/><path d="M4.4 4.6L3.6 11.4M7.6 4.6L6.8 11.4M2.6 6.6H9.2M2.2 9.4H8.8" stroke="#2e9a3c" stroke-width="1.2" fill="none"/></svg><div class="t " style="left:595.3px;top:1026.6px;">IFlyable</div><svg class="a" style="left:579px;top:1043.6px;" width="12" height="14.2" viewBox="0 0 12 14.2"><path d="M0.6 1.2Q0.6 0.4 1.4 0.4H8.2L11.4 3.6V13Q11.4 13.8 10.6 13.8H1.4Q0.6 13.8 0.6 13Z" fill="#f4f4f4"/><path d="M8.2 0.4V3.6H11.4Z" fill="#c8c8c8"/><path d="M4.4 4.6L3.6 11.4M7.6 4.6L6.8 11.4M2.6 6.6H9.2M2.2 9.4H8.8" stroke="#2e9a3c" stroke-width="1.2" fill="none"/></svg><div class="t " style="left:595.3px;top:1042.6px;">Manager</div><svg class="a" style="left:579px;top:1061.8px;" width="12.6" height="10.6" viewBox="0 0 12.6 10.6"><path d="M0.4 1.6Q0.4 0.6 1.4 0.6H4.6L6 2.2H11.6Q12.6 2.2 12.6 3.2V9.8Q12.6 10.8 11.6 10.8H1.4Q0.4 10.8 0.4 9.8Z" fill="#c0c0c0"/></svg><div class="t " style="left:595.3px;top:1058.6px;">Scenes</div><svg class="a" style="left:579px;top:1075.6px;" width="12" height="14.2" viewBox="0 0 12 14.2"><path d="M0.6 1.2Q0.6 0.4 1.4 0.4H8.2L11.4 3.6V13Q11.4 13.8 10.6 13.8H1.4Q0.6 13.8 0.6 13Z" fill="#f4f4f4"/><path d="M8.2 0.4V3.6H11.4Z" fill="#c8c8c8"/><path d="M4.4 4.6L3.6 11.4M7.6 4.6L6.8 11.4M2.6 6.6H9.2M2.2 9.4H8.8" stroke="#2e9a3c" stroke-width="1.2" fill="none"/></svg><div class="t " style="left:595.3px;top:1074.6px;">Sparrow</div><div class="a" style="left:561px;top:1431.6px;width:544px;height:21px;background:#414141"></div><div class="a" style="left:1040px;top:1442.6px;width:49px;height:1.3px;background:#6a6a6a"></div><div class="a" style="left:1033.8px;top:1438.2px;width:10px;height:10px;border-radius:50%;background:#a2a2a2"></div><div class="a" style="left:55px;top:1453px;width:2065px;height:23px;background:#191919"></div><div class="a" style="left:2012.6px;top:1454px;width:1px;height:21px;background:#242424"></div><div class="a" style="left:2039.2px;top:1454px;width:1px;height:21px;background:#242424"></div><div class="a" style="left:2065.8px;top:1454px;width:1px;height:21px;background:#242424"></div><div class="a" style="left:2092.4px;top:1454px;width:1px;height:21px;background:#242424"></div><svg class="a" style="left:2019px;top:1458px;" width="13" height="14" viewBox="0 0 13 14"><ellipse cx="5.4" cy="8" rx="3.2" ry="4.6" fill="#f2b90f"/><circle cx="5.6" cy="2.8" r="2" fill="#f2b90f"/><path d="M2.6 5.4L0.4 3.2M8.4 5L10.8 2M2.2 8.4H0M2.6 11L0.6 13.2M8 11L9 12.6" stroke="#f2b90f" stroke-width="1.3" fill="none"/><rect x="10.2" y="5.6" width="1.8" height="4.8" fill="#f2b90f"/><rect x="10.2" y="11.4" width="1.8" height="1.8" fill="#f2b90f"/></svg><svg class="a" style="left:2045.5px;top:1458px;" width="14" height="14" viewBox="0 0 14 14"><ellipse cx="6.4" cy="2.8" rx="5.6" ry="2.4" fill="#c4c4c4"/><path d="M0.8 5.2Q6.4 9.4 12 5.2V7.6Q6.4 11.6 0.8 7.6Z" fill="#c4c4c4"/><path d="M0.8 9.4Q6.4 13.6 12 9.4V11Q6.4 15 0.8 11Z" fill="#c4c4c4"/><path d="M1.4 2L13.4 13.6" stroke="#191919" stroke-width="2.4"/><path d="M1.8 1.2L13.6 12.8" stroke="#c4c4c4" stroke-width="1.1"/></svg><svg class="a" style="left:2072px;top:1458px;" width="14" height="14" viewBox="0 0 14 14"><circle cx="7" cy="7" r="6.2" fill="none" stroke="#c4c4c4" stroke-width="1.1" stroke-dasharray="5 2"/><ellipse cx="7" cy="8.2" rx="2.4" ry="3.2" fill="#c4c4c4"/><circle cx="7" cy="4" r="1.5" fill="#c4c4c4"/><path d="M1.4 1.4L12.8 12.8" stroke="#191919" stroke-width="2.4"/><path d="M1.6 0.8L13.2 12.4" stroke="#c4c4c4" stroke-width="1.1"/></svg><svg class="a" style="left:2098px;top:1458px;" width="14" height="14" viewBox="0 0 14 14"><circle cx="7" cy="7" r="6.2" fill="none" stroke="#c4c4c4" stroke-width="1.2"/><path d="M4 7.2L6.2 9.2L10 4.8" fill="none" stroke="#c4c4c4" stroke-width="1.5"/></svg><div class="tabs" style="left:1107px;top:901px;width:524px;height:19px;"></div><div class="tab" style="left:1107px;top:901px;width:87px;height:19px;left:1107px;top:901px"></div><svg class="a" style="left:1116.2px;top:905px;" width="10" height="10" viewBox="0 0 10 10"><rect x="0" y="0" width="10" height="10" rx="1.2" fill="#c4c4c4"/><path d="M1.6 2.6H8.4M1.6 5H8.4M1.6 7.4H6.4" stroke="#3c3c3c" stroke-width="1"/></svg><div class="t " style="left:1131px;top:904px;">Console</div><svg class="a" style="left:1616.5px;top:905px;" width="3" height="10" viewBox="0 0 3 10"><rect x=".5" y="0" width="2" height="2" fill="#c4c4c4"/><rect x=".5" y="3.8" width="2" height="2" fill="#c4c4c4"/><rect x=".5" y="7.6" width="2" height="2" fill="#c4c4c4"/></svg><div class="tb" style="left:1107px;top:920px;width:524px;height:20px;"></div><div class="a" style="left:1107px;top:939.5px;width:524px;height:1px;background:#232323"></div><div class="pn" style="left:1107px;top:940px;width:524px;height:513px;"></div><div class="sep" style="left:1163.4px;top:920px;width:1px;height:19.5px;background:#2c2c2c"></div><div class="sep" style="left:1222.2px;top:920px;width:1px;height:19.5px;background:#2c2c2c"></div><div class="sep" style="left:1295.7px;top:920px;width:1px;height:19.5px;background:#2c2c2c"></div><div class="sep" style="left:1347px;top:920px;width:1px;height:19.5px;background:#2c2c2c"></div><div class="sep" style="left:1146.3px;top:924px;width:1px;height:12px;background:#2c2c2c"></div><div class="t " style="left:1111.3px;top:922.8px;">Clear</div><svg class="a" style="left:1151.3px;top:928.2px;" width="7" height="4" viewBox="0 0 7 4"><path d="M0 0H7L3.5 4Z" fill="#c4c4c4"/></svg><div class="t " style="left:1167.5px;top:922.8px;">Collapse</div><div class="t " style="left:1227.5px;top:922.8px;">Error Pause</div><div class="t " style="left:1300px;top:922.8px;">Editor</div><svg class="a" style="left:1335.7px;top:928.2px;" width="7" height="4" viewBox="0 0 7 4"><path d="M0 0H7L3.5 4Z" fill="#c4c4c4"/></svg><div class="fld" style="left:1349.5px;top:922.6px;width:177px;height:15px;background:#2a2a2a;border-color:#1f1f1f;border-radius:4px"></div><svg class="a" style="left:1354px;top:926.5px;" width="8" height="8" viewBox="0 0 8 8"><circle cx="3" cy="3" r="2.2" fill="none" stroke="#b0b0b0" stroke-width="1.2"/><path d="M4.7 4.7L7.3 7.3" stroke="#b0b0b0" stroke-width="1.4"/></svg><div class="a" style="left:1529px;top:920.3px;width:32.6px;height:19px;background:#4a4a4a"></div><div class="a" style="left:1563.2px;top:920.3px;width:32.6px;height:19px;background:#4a4a4a"></div><div class="a" style="left:1597.3px;top:920.3px;width:33px;height:19px;background:#4a4a4a"></div><svg class="a" style="left:1534px;top:923.5px;" width="13" height="13" viewBox="0 0 13 13"><path d="M6.5 0.4A6 6 0 0 1 11 10.4L12.4 12.8L8.6 12A6 6 0 1 1 6.5 0.4Z" fill="#8a8a8a"/><rect x="5.6" y="2.8" width="1.8" height="5" fill="#4a4a4a"/><rect x="5.6" y="8.8" width="1.8" height="1.7" fill="#4a4a4a"/></svg><div class="t " style="left:1550px;top:922.8px;color:#c4c4c4">0</div><svg class="a" style="left:1567.6px;top:923.8px;" width="14" height="12.4" viewBox="0 0 14 12.4"><path d="M7 0.2L13.8 12.2H0.2Z" fill="#8a8a8a"/><rect x="6.2" y="4" width="1.6" height="4.6" fill="#4a4a4a"/><rect x="6.2" y="9.4" width="1.6" height="1.5" fill="#4a4a4a"/></svg><div class="t " style="left:1584.2px;top:922.8px;color:#c4c4c4">0</div><svg class="a" style="left:1601.6px;top:923.4px;" width="13" height="13" viewBox="0 0 13 13"><path d="M3.9 0.3H9.1L12.7 3.9V9.1L9.1 12.7H3.9L0.3 9.1V3.9Z" fill="#dcdcdc"/><rect x="5.6" y="2.6" width="1.8" height="5.2" fill="#4a4a4a"/><rect x="5.6" y="8.8" width="1.8" height="1.8" fill="#4a4a4a"/></svg><div class="t " style="left:1618.2px;top:922.8px;color:#c4c4c4">0</div><div class="a" style="left:1107px;top:1298px;width:524px;height:1px;background:#232323"></div></div></div><div id="rim"></div></body></html>
